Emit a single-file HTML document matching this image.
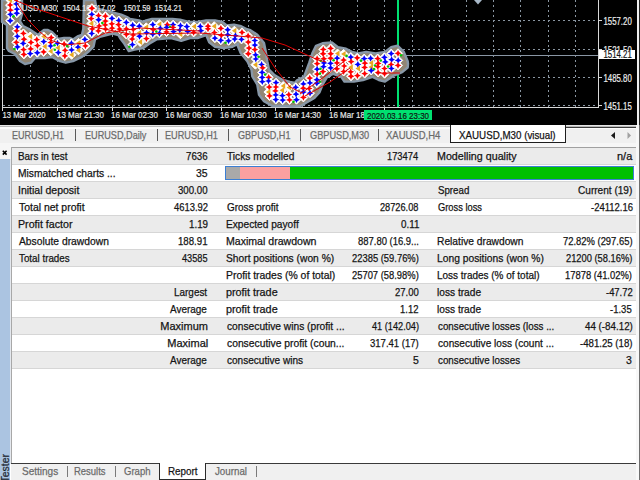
<!DOCTYPE html>
<html><head><meta charset="utf-8">
<style>
*{margin:0;padding:0;box-sizing:border-box}
html,body{width:640px;height:480px;overflow:hidden;background:#fff;font-family:"Liberation Sans",sans-serif}
.a{position:absolute}
.row{position:absolute;left:12px;width:624px;height:16px}
.g{background:#ebebeb}
.w{background:#fff}
.line{position:absolute;left:12px;width:624px;height:1px;background:#d6d6d6}
.c{position:absolute;font-size:11px;line-height:16px;color:#141414;white-space:nowrap;transform-origin:0 0;-webkit-text-stroke:0.25px currentColor}
.sc{display:inline-block}
.l{transform-origin:left center}
.r{transform-origin:right center}
svg text{font-family:"Liberation Sans",sans-serif;stroke-width:0.2px}
</style></head><body>
<svg class="a" style="left:0;top:0" width="640" height="125" viewBox="0 0 640 125">
<rect x="0" y="0" width="640" height="125" fill="#000"/>
<line x1="3" y1="20.5" x2="598" y2="20.5" stroke="#8a96a2" stroke-dasharray="2 3"/>
<line x1="3" y1="49.5" x2="598" y2="49.5" stroke="#8a96a2" stroke-dasharray="2 3"/>
<line x1="3" y1="77.5" x2="598" y2="77.5" stroke="#8a96a2" stroke-dasharray="2 3"/>
<line x1="3" y1="105.5" x2="598" y2="105.5" stroke="#8a96a2" stroke-dasharray="2 3"/>
<line x1="30.5" y1="0" x2="30.5" y2="107" stroke="#8a96a2" stroke-dasharray="2 3"/>
<line x1="57.5" y1="0" x2="57.5" y2="107" stroke="#8a96a2" stroke-dasharray="2 3"/>
<line x1="84.5" y1="0" x2="84.5" y2="107" stroke="#8a96a2" stroke-dasharray="2 3"/>
<line x1="112.5" y1="0" x2="112.5" y2="107" stroke="#8a96a2" stroke-dasharray="2 3"/>
<line x1="139.5" y1="0" x2="139.5" y2="107" stroke="#8a96a2" stroke-dasharray="2 3"/>
<line x1="166.5" y1="0" x2="166.5" y2="107" stroke="#8a96a2" stroke-dasharray="2 3"/>
<line x1="194.5" y1="0" x2="194.5" y2="107" stroke="#8a96a2" stroke-dasharray="2 3"/>
<line x1="221.5" y1="0" x2="221.5" y2="107" stroke="#8a96a2" stroke-dasharray="2 3"/>
<line x1="248.5" y1="0" x2="248.5" y2="107" stroke="#8a96a2" stroke-dasharray="2 3"/>
<line x1="275.5" y1="0" x2="275.5" y2="107" stroke="#8a96a2" stroke-dasharray="2 3"/>
<line x1="302.5" y1="0" x2="302.5" y2="107" stroke="#8a96a2" stroke-dasharray="2 3"/>
<line x1="330.5" y1="0" x2="330.5" y2="107" stroke="#8a96a2" stroke-dasharray="2 3"/>
<line x1="357.5" y1="0" x2="357.5" y2="107" stroke="#8a96a2" stroke-dasharray="2 3"/>
<line x1="384.5" y1="0" x2="384.5" y2="107" stroke="#8a96a2" stroke-dasharray="2 3"/>
<line x1="412.5" y1="0" x2="412.5" y2="107" stroke="#8a96a2" stroke-dasharray="2 3"/>
<line x1="439.5" y1="0" x2="439.5" y2="107" stroke="#8a96a2" stroke-dasharray="2 3"/>
<line x1="466.5" y1="0" x2="466.5" y2="107" stroke="#8a96a2" stroke-dasharray="2 3"/>
<line x1="493.5" y1="0" x2="493.5" y2="107" stroke="#8a96a2" stroke-dasharray="2 3"/>
<line x1="520.5" y1="0" x2="520.5" y2="107" stroke="#8a96a2" stroke-dasharray="2 3"/>
<line x1="548.5" y1="0" x2="548.5" y2="107" stroke="#8a96a2" stroke-dasharray="2 3"/>
<line x1="575.5" y1="0" x2="575.5" y2="107" stroke="#8a96a2" stroke-dasharray="2 3"/>
<line x1="2.5" y1="0" x2="2.5" y2="107.5" stroke="#d8d8d8"/>
<line x1="2" y1="107.5" x2="599" y2="107.5" stroke="#d8d8d8"/>
<line x1="598.5" y1="0" x2="598.5" y2="108" stroke="#d8d8d8"/>
<rect x="637" y="0" width="2" height="125" fill="#f0f0f0"/><rect x="639" y="0" width="1" height="125" fill="#202020"/>
<line x1="3" y1="55.5" x2="598" y2="55.5" stroke="#8a96a4"/>
<line x1="598" y1="20.5" x2="602" y2="20.5" stroke="#d8d8d8"/>
<line x1="598" y1="49.5" x2="602" y2="49.5" stroke="#d8d8d8"/>
<line x1="598" y1="77.5" x2="602" y2="77.5" stroke="#d8d8d8"/>
<line x1="598" y1="105.5" x2="602" y2="105.5" stroke="#d8d8d8"/>
<line x1="2.5" y1="107" x2="2.5" y2="111" stroke="#d8d8d8"/>
<line x1="57.5" y1="107" x2="57.5" y2="111" stroke="#d8d8d8"/>
<line x1="112.5" y1="107" x2="112.5" y2="111" stroke="#d8d8d8"/>
<line x1="166.5" y1="107" x2="166.5" y2="111" stroke="#d8d8d8"/>
<line x1="221.5" y1="107" x2="221.5" y2="111" stroke="#d8d8d8"/>
<line x1="275.5" y1="107" x2="275.5" y2="111" stroke="#d8d8d8"/>
<line x1="330.5" y1="107" x2="330.5" y2="111" stroke="#d8d8d8"/>
<line x1="384.5" y1="107" x2="384.5" y2="111" stroke="#d8d8d8"/>
<text x="603.4" y="24.6" font-size="10" fill="#ececec" stroke="#ececec" textLength="28.4" lengthAdjust="spacingAndGlyphs">1557.20</text>
<text x="603.4" y="53.6" font-size="10" fill="#ececec" stroke="#ececec" textLength="28.4" lengthAdjust="spacingAndGlyphs">1521.50</text>
<text x="603.4" y="81.6" font-size="10" fill="#ececec" stroke="#ececec" textLength="28.4" lengthAdjust="spacingAndGlyphs">1485.80</text>
<text x="603.4" y="109.6" font-size="10" fill="#ececec" stroke="#ececec" textLength="28.4" lengthAdjust="spacingAndGlyphs">1451.15</text>
<rect x="599" y="50" width="36" height="9" fill="#fff"/>
<text x="603.4" y="58" font-size="10" fill="#111" stroke="#111" textLength="28.4" lengthAdjust="spacingAndGlyphs">1514.21</text>
<text x="2.5" y="118" font-size="9.5" fill="#e8e8e8" stroke="#e8e8e8" textLength="43" lengthAdjust="spacingAndGlyphs">13 Mar 2020</text>
<text x="57" y="118" font-size="9.5" fill="#e8e8e8" stroke="#e8e8e8" textLength="47" lengthAdjust="spacingAndGlyphs">13 Mar 21:30</text>
<text x="111" y="118" font-size="9.5" fill="#e8e8e8" stroke="#e8e8e8" textLength="47" lengthAdjust="spacingAndGlyphs">16 Mar 02:30</text>
<text x="165.5" y="118" font-size="9.5" fill="#e8e8e8" stroke="#e8e8e8" textLength="46.5" lengthAdjust="spacingAndGlyphs">16 Mar 06:30</text>
<text x="220" y="118" font-size="9.5" fill="#e8e8e8" stroke="#e8e8e8" textLength="46.6" lengthAdjust="spacingAndGlyphs">16 Mar 10:30</text>
<text x="274" y="118" font-size="9.5" fill="#e8e8e8" stroke="#e8e8e8" textLength="47" lengthAdjust="spacingAndGlyphs">16 Mar 14:30</text>
<text x="329" y="118" font-size="9.5" fill="#e8e8e8" stroke="#e8e8e8" textLength="47" lengthAdjust="spacingAndGlyphs">16 Mar 18:30</text>
<rect x="364" y="110" width="68" height="10" fill="#00e070"/>
<text x="367" y="118.5" font-size="9.5" fill="#111" stroke="#111" textLength="62" lengthAdjust="spacingAndGlyphs">2020.03.16 23:30</text>
<rect x="397" y="0" width="2" height="107" fill="#00e070"/>
<path d="M474 0 L482 0 L478 4.5 Z" fill="#a8b8c8"/>
<defs>
<filter id="er4" x="-5%" y="-20%" width="110%" height="140%"><feMorphology operator="erode" radius="4.5"/></filter>
<mask id="inner" maskUnits="userSpaceOnUse" x="0" y="0" width="640" height="125"><polygon points="2.0,0.0 22.0,0.0 22.0,14.0 20.0,21.0 23.0,26.0 29.0,29.0 35.0,33.0 38.0,35.0 40.0,33.0 44.0,30.0 48.0,30.0 52.0,32.0 55.0,35.0 58.0,39.0 64.0,38.0 70.0,38.0 73.0,39.4 77.5,36.5 81.9,35.0 83.3,29.0 84.0,0.0 95.0,0.0 96.0,6.0 97.9,8.8 103.8,10.2 109.6,11.7 115.4,13.1 121.2,14.6 127.0,17.0 130.0,19.0 139.0,20.4 143.3,21.9 146.2,20.4 152.0,19.0 163.8,19.0 172.5,19.0 180.0,19.7 188.8,21.9 197.5,21.9 206.2,20.4 215.0,20.4 222.3,21.9 226.7,25.5 234.0,24.8 241.2,26.2 247.0,29.2 250.4,30.2 257.3,34.7 264.0,43.0 265.7,51.3 267.3,61.3 269.0,69.7 274.0,74.7 282.3,79.7 290.0,82.0 295.0,83.0 297.0,80.3 304.0,76.9 309.2,63.0 312.6,52.7 316.0,45.8 322.5,43.3 331.9,42.5 338.0,47.2 346.0,48.8 352.0,51.9 358.4,53.4 366.2,51.9 375.6,53.4 385.0,51.9 391.2,47.2 397.5,45.6 403.8,51.9 407.7,61.2 408.0,64.0 407.7,67.5 402.2,72.2 394.4,75.3 385.0,81.6 378.8,80.0 372.5,76.9 363.0,80.0 353.8,81.6 344.4,81.6 341.2,76.9 333.4,73.8 327.2,76.9 322.5,84.7 319.4,92.5 314.4,98.0 309.2,101.0 300.5,106.0 291.9,106.5 285.0,106.0 272.3,106.0 264.0,101.3 259.0,94.7 257.3,84.7 252.3,76.3 251.5,69.7 247.3,61.3 240.7,53.0 237.3,44.7 238.3,43.8 232.5,46.7 223.8,48.0 215.0,46.7 209.2,42.3 206.2,35.0 197.5,38.0 190.0,38.0 181.2,40.8 171.0,38.0 156.5,39.4 149.2,43.8 143.3,48.0 134.6,49.6 128.8,51.0 124.4,43.8 120.0,38.0 118.3,35.0 112.5,33.5 106.7,35.0 100.8,36.5 95.0,39.4 93.5,46.7 89.2,51.0 81.9,56.9 73.0,61.2 65.8,62.7 60.0,61.2 52.0,57.0 45.0,58.0 40.0,58.0 35.0,58.0 31.0,62.7 25.0,64.0 20.0,61.0 15.0,54.0 9.0,51.0 7.0,48.0 7.0,25.0 2.0,22.0" fill="#fff" filter="url(#er4)"/></mask>
</defs>
<polygon points="2.0,0.0 22.0,0.0 22.0,14.0 20.0,21.0 23.0,26.0 29.0,29.0 35.0,33.0 38.0,35.0 40.0,33.0 44.0,30.0 48.0,30.0 52.0,32.0 55.0,35.0 58.0,39.0 64.0,38.0 70.0,38.0 73.0,39.4 77.5,36.5 81.9,35.0 83.3,29.0 84.0,0.0 95.0,0.0 96.0,6.0 97.9,8.8 103.8,10.2 109.6,11.7 115.4,13.1 121.2,14.6 127.0,17.0 130.0,19.0 139.0,20.4 143.3,21.9 146.2,20.4 152.0,19.0 163.8,19.0 172.5,19.0 180.0,19.7 188.8,21.9 197.5,21.9 206.2,20.4 215.0,20.4 222.3,21.9 226.7,25.5 234.0,24.8 241.2,26.2 247.0,29.2 250.4,30.2 257.3,34.7 264.0,43.0 265.7,51.3 267.3,61.3 269.0,69.7 274.0,74.7 282.3,79.7 290.0,82.0 295.0,83.0 297.0,80.3 304.0,76.9 309.2,63.0 312.6,52.7 316.0,45.8 322.5,43.3 331.9,42.5 338.0,47.2 346.0,48.8 352.0,51.9 358.4,53.4 366.2,51.9 375.6,53.4 385.0,51.9 391.2,47.2 397.5,45.6 403.8,51.9 407.7,61.2 408.0,64.0 407.7,67.5 402.2,72.2 394.4,75.3 385.0,81.6 378.8,80.0 372.5,76.9 363.0,80.0 353.8,81.6 344.4,81.6 341.2,76.9 333.4,73.8 327.2,76.9 322.5,84.7 319.4,92.5 314.4,98.0 309.2,101.0 300.5,106.0 291.9,106.5 285.0,106.0 272.3,106.0 264.0,101.3 259.0,94.7 257.3,84.7 252.3,76.3 251.5,69.7 247.3,61.3 240.7,53.0 237.3,44.7 238.3,43.8 232.5,46.7 223.8,48.0 215.0,46.7 209.2,42.3 206.2,35.0 197.5,38.0 190.0,38.0 181.2,40.8 171.0,38.0 156.5,39.4 149.2,43.8 143.3,48.0 134.6,49.6 128.8,51.0 124.4,43.8 120.0,38.0 118.3,35.0 112.5,33.5 106.7,35.0 100.8,36.5 95.0,39.4 93.5,46.7 89.2,51.0 81.9,56.9 73.0,61.2 65.8,62.7 60.0,61.2 52.0,57.0 45.0,58.0 40.0,58.0 35.0,58.0 31.0,62.7 25.0,64.0 20.0,61.0 15.0,54.0 9.0,51.0 7.0,48.0 7.0,25.0 2.0,22.0" fill="#928674" stroke="#8898a8" stroke-width="2.4" stroke-linejoin="round"/>
<text x="5" y="11" font-size="9.5" fill="#e8e8e8" stroke="#e8e8e8" textLength="52" lengthAdjust="spacingAndGlyphs">XAUUSD,M30</text>
<text x="62.5" y="11" font-size="9.5" fill="#e8e8e8" stroke="#e8e8e8" textLength="28" lengthAdjust="spacingAndGlyphs">1504.16</text>
<text x="88.5" y="11" font-size="9.5" fill="#e8e8e8" stroke="#e8e8e8" textLength="27" lengthAdjust="spacingAndGlyphs">1517.02</text>
<text x="123.5" y="11" font-size="9.5" fill="#e8e8e8" stroke="#e8e8e8" textLength="27" lengthAdjust="spacingAndGlyphs">1501.59</text>
<text x="154.5" y="11" font-size="9.5" fill="#e8e8e8" stroke="#e8e8e8" textLength="27.5" lengthAdjust="spacingAndGlyphs">1514.21</text>
<g>
<path d="M5.6 -0.1 L10.1 -4.6 L14.6 -0.1 L10.1 4.4 Z" fill="#fff" stroke="#fff" stroke-width="1"/>
<path d="M5.7 5.0 L10.2 0.5 L14.7 5.0 L10.2 9.5 Z" fill="#fff" stroke="#fff" stroke-width="1"/>
<path d="M5.9 10.2 L10.4 5.7 L14.9 10.2 L10.4 14.7 Z" fill="#fff" stroke="#fff" stroke-width="1"/>
<path d="M5.9 14.3 L10.4 9.8 L14.9 14.3 L10.4 18.8 Z" fill="#fff" stroke="#fff" stroke-width="1"/>
<path d="M5.7 20.7 L10.2 16.2 L14.7 20.7 L10.2 25.2 Z" fill="#fff" stroke="#fff" stroke-width="1"/>
<path d="M12.4 -0.8 L16.9 -5.3 L21.4 -0.8 L16.9 3.7 Z" fill="#fff" stroke="#fff" stroke-width="1"/>
<path d="M11.8 3.9 L16.3 -0.6 L20.8 3.9 L16.3 8.4 Z" fill="#fff" stroke="#fff" stroke-width="1"/>
<path d="M12.4 9.2 L16.9 4.7 L21.4 9.2 L16.9 13.7 Z" fill="#fff" stroke="#fff" stroke-width="1"/>
<path d="M12.3 13.3 L16.8 8.8 L21.3 13.3 L16.8 17.8 Z" fill="#fff" stroke="#fff" stroke-width="1"/>
<path d="M12.8 26.8 L17.3 22.3 L21.8 26.8 L17.3 31.3 Z" fill="#fff" stroke="#fff" stroke-width="1"/>
<path d="M12.1 30.8 L16.6 26.3 L21.1 30.8 L16.6 35.3 Z" fill="#fff" stroke="#fff" stroke-width="1"/>
<path d="M12.8 36.3 L17.3 31.8 L21.8 36.3 L17.3 40.8 Z" fill="#fff" stroke="#fff" stroke-width="1"/>
<path d="M11.8 42.3 L16.3 37.8 L20.8 42.3 L16.3 46.8 Z" fill="#fff" stroke="#fff" stroke-width="1"/>
<path d="M13.0 47.0 L17.5 42.5 L22.0 47.0 L17.5 51.5 Z" fill="#fff" stroke="#fff" stroke-width="1"/>
<path d="M18.9 33.4 L23.4 28.9 L27.9 33.4 L23.4 37.9 Z" fill="#fff" stroke="#fff" stroke-width="1"/>
<path d="M19.5 39.2 L24.0 34.7 L28.5 39.2 L24.0 43.7 Z" fill="#fff" stroke="#fff" stroke-width="1"/>
<path d="M18.7 43.4 L23.2 38.9 L27.7 43.4 L23.2 47.9 Z" fill="#fff" stroke="#fff" stroke-width="1"/>
<path d="M19.1 49.6 L23.6 45.1 L28.1 49.6 L23.6 54.1 Z" fill="#fff" stroke="#fff" stroke-width="1"/>
<path d="M19.4 54.4 L23.9 49.9 L28.4 54.4 L23.9 58.9 Z" fill="#fff" stroke="#fff" stroke-width="1"/>
<path d="M25.7 36.5 L30.2 32.0 L34.7 36.5 L30.2 41.0 Z" fill="#fff" stroke="#fff" stroke-width="1"/>
<path d="M26.5 42.4 L31.0 37.9 L35.5 42.4 L31.0 46.9 Z" fill="#fff" stroke="#fff" stroke-width="1"/>
<path d="M26.2 48.9 L30.7 44.4 L35.2 48.9 L30.7 53.4 Z" fill="#fff" stroke="#fff" stroke-width="1"/>
<path d="M25.7 53.5 L30.2 49.0 L34.7 53.5 L30.2 58.0 Z" fill="#fff" stroke="#fff" stroke-width="1"/>
<path d="M32.3 39.7 L36.8 35.2 L41.3 39.7 L36.8 44.2 Z" fill="#fff" stroke="#fff" stroke-width="1"/>
<path d="M32.9 45.6 L37.4 41.1 L41.9 45.6 L37.4 50.1 Z" fill="#fff" stroke="#fff" stroke-width="1"/>
<path d="M32.8 52.7 L37.3 48.2 L41.8 52.7 L37.3 57.2 Z" fill="#fff" stroke="#fff" stroke-width="1"/>
<path d="M39.2 36.5 L43.7 32.0 L48.2 36.5 L43.7 41.0 Z" fill="#fff" stroke="#fff" stroke-width="1"/>
<path d="M39.3 41.6 L43.8 37.1 L48.3 41.6 L43.8 46.1 Z" fill="#fff" stroke="#fff" stroke-width="1"/>
<path d="M40.2 46.5 L44.7 42.0 L49.2 46.5 L44.7 51.0 Z" fill="#fff" stroke="#fff" stroke-width="1"/>
<path d="M39.1 51.9 L43.6 47.4 L48.1 51.9 L43.6 56.4 Z" fill="#fff" stroke="#fff" stroke-width="1"/>
<path d="M46.7 37.6 L51.2 33.1 L55.7 37.6 L51.2 42.1 Z" fill="#fff" stroke="#fff" stroke-width="1"/>
<path d="M46.2 42.5 L50.7 38.0 L55.2 42.5 L50.7 47.0 Z" fill="#fff" stroke="#fff" stroke-width="1"/>
<path d="M46.1 46.0 L50.6 41.5 L55.1 46.0 L50.6 50.5 Z" fill="#fff" stroke="#fff" stroke-width="1"/>
<path d="M46.2 51.2 L50.7 46.7 L55.2 51.2 L50.7 55.7 Z" fill="#fff" stroke="#fff" stroke-width="1"/>
<path d="M53.0 43.2 L57.5 38.7 L62.0 43.2 L57.5 47.7 Z" fill="#fff" stroke="#fff" stroke-width="1"/>
<path d="M53.3 47.7 L57.8 43.2 L62.3 47.7 L57.8 52.2 Z" fill="#fff" stroke="#fff" stroke-width="1"/>
<path d="M53.8 52.6 L58.3 48.1 L62.8 52.6 L58.3 57.1 Z" fill="#fff" stroke="#fff" stroke-width="1"/>
<path d="M59.6 44.1 L64.1 39.6 L68.6 44.1 L64.1 48.6 Z" fill="#fff" stroke="#fff" stroke-width="1"/>
<path d="M60.6 50.3 L65.1 45.8 L69.6 50.3 L65.1 54.8 Z" fill="#fff" stroke="#fff" stroke-width="1"/>
<path d="M60.3 56.0 L64.8 51.5 L69.3 56.0 L64.8 60.5 Z" fill="#fff" stroke="#fff" stroke-width="1"/>
<path d="M66.9 43.3 L71.4 38.8 L75.9 43.3 L71.4 47.8 Z" fill="#fff" stroke="#fff" stroke-width="1"/>
<path d="M67.1 49.9 L71.6 45.4 L76.1 49.9 L71.6 54.4 Z" fill="#fff" stroke="#fff" stroke-width="1"/>
<path d="M67.1 54.8 L71.6 50.3 L76.1 54.8 L71.6 59.3 Z" fill="#fff" stroke="#fff" stroke-width="1"/>
<path d="M74.0 42.9 L78.5 38.4 L83.0 42.9 L78.5 47.4 Z" fill="#fff" stroke="#fff" stroke-width="1"/>
<path d="M73.5 47.2 L78.0 42.7 L82.5 47.2 L78.0 51.7 Z" fill="#fff" stroke="#fff" stroke-width="1"/>
<path d="M73.9 50.3 L78.4 45.8 L82.9 50.3 L78.4 54.8 Z" fill="#fff" stroke="#fff" stroke-width="1"/>
<path d="M80.4 39.4 L84.9 34.9 L89.4 39.4 L84.9 43.9 Z" fill="#fff" stroke="#fff" stroke-width="1"/>
<path d="M80.9 45.9 L85.4 41.4 L89.9 45.9 L85.4 50.4 Z" fill="#fff" stroke="#fff" stroke-width="1"/>
<path d="M87.4 8.2 L91.9 3.7 L96.4 8.2 L91.9 12.7 Z" fill="#fff" stroke="#fff" stroke-width="1"/>
<path d="M87.3 14.3 L91.8 9.8 L96.3 14.3 L91.8 18.8 Z" fill="#fff" stroke="#fff" stroke-width="1"/>
<path d="M86.7 18.6 L91.2 14.1 L95.7 18.6 L91.2 23.1 Z" fill="#fff" stroke="#fff" stroke-width="1"/>
<path d="M86.9 23.5 L91.4 19.0 L95.9 23.5 L91.4 28.0 Z" fill="#fff" stroke="#fff" stroke-width="1"/>
<path d="M87.8 28.9 L92.3 24.4 L96.8 28.9 L92.3 33.4 Z" fill="#fff" stroke="#fff" stroke-width="1"/>
<path d="M87.2 33.5 L91.7 29.0 L96.2 33.5 L91.7 38.0 Z" fill="#fff" stroke="#fff" stroke-width="1"/>
<path d="M94.0 15.6 L98.5 11.1 L103.0 15.6 L98.5 20.1 Z" fill="#fff" stroke="#fff" stroke-width="1"/>
<path d="M94.1 19.8 L98.6 15.3 L103.1 19.8 L98.6 24.3 Z" fill="#fff" stroke="#fff" stroke-width="1"/>
<path d="M94.7 26.0 L99.2 21.5 L103.7 26.0 L99.2 30.5 Z" fill="#fff" stroke="#fff" stroke-width="1"/>
<path d="M93.9 30.9 L98.4 26.4 L102.9 30.9 L98.4 35.4 Z" fill="#fff" stroke="#fff" stroke-width="1"/>
<path d="M100.9 16.2 L105.4 11.7 L109.9 16.2 L105.4 20.7 Z" fill="#fff" stroke="#fff" stroke-width="1"/>
<path d="M100.9 21.1 L105.4 16.6 L109.9 21.1 L105.4 25.6 Z" fill="#fff" stroke="#fff" stroke-width="1"/>
<path d="M100.7 25.0 L105.2 20.5 L109.7 25.0 L105.2 29.5 Z" fill="#fff" stroke="#fff" stroke-width="1"/>
<path d="M101.1 29.1 L105.6 24.6 L110.1 29.1 L105.6 33.6 Z" fill="#fff" stroke="#fff" stroke-width="1"/>
<path d="M107.5 18.4 L112.0 13.9 L116.5 18.4 L112.0 22.9 Z" fill="#fff" stroke="#fff" stroke-width="1"/>
<path d="M107.3 23.8 L111.8 19.3 L116.3 23.8 L111.8 28.3 Z" fill="#fff" stroke="#fff" stroke-width="1"/>
<path d="M107.6 28.2 L112.1 23.7 L116.6 28.2 L112.1 32.7 Z" fill="#fff" stroke="#fff" stroke-width="1"/>
<path d="M114.3 20.5 L118.8 16.0 L123.3 20.5 L118.8 25.0 Z" fill="#fff" stroke="#fff" stroke-width="1"/>
<path d="M114.0 24.6 L118.5 20.1 L123.0 24.6 L118.5 29.1 Z" fill="#fff" stroke="#fff" stroke-width="1"/>
<path d="M115.1 29.1 L119.6 24.6 L124.1 29.1 L119.6 33.6 Z" fill="#fff" stroke="#fff" stroke-width="1"/>
<path d="M121.8 22.5 L126.3 18.0 L130.8 22.5 L126.3 27.0 Z" fill="#fff" stroke="#fff" stroke-width="1"/>
<path d="M121.8 28.9 L126.3 24.4 L130.8 28.9 L126.3 33.4 Z" fill="#fff" stroke="#fff" stroke-width="1"/>
<path d="M121.8 34.5 L126.3 30.0 L130.8 34.5 L126.3 39.0 Z" fill="#fff" stroke="#fff" stroke-width="1"/>
<path d="M128.2 25.2 L132.7 20.7 L137.2 25.2 L132.7 29.7 Z" fill="#fff" stroke="#fff" stroke-width="1"/>
<path d="M128.8 29.5 L133.3 25.0 L137.8 29.5 L133.3 34.0 Z" fill="#fff" stroke="#fff" stroke-width="1"/>
<path d="M128.7 35.0 L133.2 30.5 L137.7 35.0 L133.2 39.5 Z" fill="#fff" stroke="#fff" stroke-width="1"/>
<path d="M127.7 39.1 L132.2 34.6 L136.7 39.1 L132.2 43.6 Z" fill="#fff" stroke="#fff" stroke-width="1"/>
<path d="M127.9 44.7 L132.4 40.2 L136.9 44.7 L132.4 49.2 Z" fill="#fff" stroke="#fff" stroke-width="1"/>
<path d="M134.8 26.3 L139.3 21.8 L143.8 26.3 L139.3 30.8 Z" fill="#fff" stroke="#fff" stroke-width="1"/>
<path d="M134.7 32.7 L139.2 28.2 L143.7 32.7 L139.2 37.2 Z" fill="#fff" stroke="#fff" stroke-width="1"/>
<path d="M135.0 36.3 L139.5 31.8 L144.0 36.3 L139.5 40.8 Z" fill="#fff" stroke="#fff" stroke-width="1"/>
<path d="M135.6 42.0 L140.1 37.5 L144.6 42.0 L140.1 46.5 Z" fill="#fff" stroke="#fff" stroke-width="1"/>
<path d="M141.7 27.3 L146.2 22.8 L150.7 27.3 L146.2 31.8 Z" fill="#fff" stroke="#fff" stroke-width="1"/>
<path d="M142.1 32.8 L146.6 28.3 L151.1 32.8 L146.6 37.3 Z" fill="#fff" stroke="#fff" stroke-width="1"/>
<path d="M141.9 38.5 L146.4 34.0 L150.9 38.5 L146.4 43.0 Z" fill="#fff" stroke="#fff" stroke-width="1"/>
<path d="M148.3 24.7 L152.8 20.2 L157.3 24.7 L152.8 29.2 Z" fill="#fff" stroke="#fff" stroke-width="1"/>
<path d="M148.8 29.6 L153.3 25.1 L157.8 29.6 L153.3 34.1 Z" fill="#fff" stroke="#fff" stroke-width="1"/>
<path d="M148.3 34.1 L152.8 29.6 L157.3 34.1 L152.8 38.6 Z" fill="#fff" stroke="#fff" stroke-width="1"/>
<path d="M154.9 24.2 L159.4 19.7 L163.9 24.2 L159.4 28.7 Z" fill="#fff" stroke="#fff" stroke-width="1"/>
<path d="M155.8 28.3 L160.3 23.8 L164.8 28.3 L160.3 32.8 Z" fill="#fff" stroke="#fff" stroke-width="1"/>
<path d="M154.9 33.3 L159.4 28.8 L163.9 33.3 L159.4 37.8 Z" fill="#fff" stroke="#fff" stroke-width="1"/>
<path d="M162.8 24.7 L167.3 20.2 L171.8 24.7 L167.3 29.2 Z" fill="#fff" stroke="#fff" stroke-width="1"/>
<path d="M162.2 27.4 L166.7 22.9 L171.2 27.4 L166.7 31.9 Z" fill="#fff" stroke="#fff" stroke-width="1"/>
<path d="M162.0 32.0 L166.5 27.5 L171.0 32.0 L166.5 36.5 Z" fill="#fff" stroke="#fff" stroke-width="1"/>
<path d="M168.6 24.7 L173.1 20.2 L177.6 24.7 L173.1 29.2 Z" fill="#fff" stroke="#fff" stroke-width="1"/>
<path d="M168.5 27.4 L173.0 22.9 L177.5 27.4 L173.0 31.9 Z" fill="#fff" stroke="#fff" stroke-width="1"/>
<path d="M169.1 31.6 L173.6 27.1 L178.1 31.6 L173.6 36.1 Z" fill="#fff" stroke="#fff" stroke-width="1"/>
<path d="M176.0 25.6 L180.5 21.1 L185.0 25.6 L180.5 30.1 Z" fill="#fff" stroke="#fff" stroke-width="1"/>
<path d="M175.3 30.1 L179.8 25.6 L184.3 30.1 L179.8 34.6 Z" fill="#fff" stroke="#fff" stroke-width="1"/>
<path d="M175.9 34.2 L180.4 29.7 L184.9 34.2 L180.4 38.7 Z" fill="#fff" stroke="#fff" stroke-width="1"/>
<path d="M182.3 26.5 L186.8 22.0 L191.3 26.5 L186.8 31.0 Z" fill="#fff" stroke="#fff" stroke-width="1"/>
<path d="M183.2 31.4 L187.7 26.9 L192.2 31.4 L187.7 35.9 Z" fill="#fff" stroke="#fff" stroke-width="1"/>
<path d="M189.6 26.5 L194.1 22.0 L198.6 26.5 L194.1 31.0 Z" fill="#fff" stroke="#fff" stroke-width="1"/>
<path d="M189.1 32.4 L193.6 27.9 L198.1 32.4 L193.6 36.9 Z" fill="#fff" stroke="#fff" stroke-width="1"/>
<path d="M195.8 26.4 L200.3 21.9 L204.8 26.4 L200.3 30.9 Z" fill="#fff" stroke="#fff" stroke-width="1"/>
<path d="M196.4 30.7 L200.9 26.2 L205.4 30.7 L200.9 35.2 Z" fill="#fff" stroke="#fff" stroke-width="1"/>
<path d="M203.5 26.2 L208.0 21.7 L212.5 26.2 L208.0 30.7 Z" fill="#fff" stroke="#fff" stroke-width="1"/>
<path d="M203.5 28.8 L208.0 24.3 L212.5 28.8 L208.0 33.3 Z" fill="#fff" stroke="#fff" stroke-width="1"/>
<path d="M209.7 26.2 L214.2 21.7 L218.7 26.2 L214.2 30.7 Z" fill="#fff" stroke="#fff" stroke-width="1"/>
<path d="M209.9 32.5 L214.4 28.0 L218.9 32.5 L214.4 37.0 Z" fill="#fff" stroke="#fff" stroke-width="1"/>
<path d="M210.4 38.2 L214.9 33.7 L219.4 38.2 L214.9 42.7 Z" fill="#fff" stroke="#fff" stroke-width="1"/>
<path d="M216.4 28.4 L220.9 23.9 L225.4 28.4 L220.9 32.9 Z" fill="#fff" stroke="#fff" stroke-width="1"/>
<path d="M216.8 35.3 L221.3 30.8 L225.8 35.3 L221.3 39.8 Z" fill="#fff" stroke="#fff" stroke-width="1"/>
<path d="M216.3 40.3 L220.8 35.8 L225.3 40.3 L220.8 44.8 Z" fill="#fff" stroke="#fff" stroke-width="1"/>
<path d="M223.2 29.8 L227.7 25.3 L232.2 29.8 L227.7 34.3 Z" fill="#fff" stroke="#fff" stroke-width="1"/>
<path d="M223.2 34.8 L227.7 30.3 L232.2 34.8 L227.7 39.3 Z" fill="#fff" stroke="#fff" stroke-width="1"/>
<path d="M224.1 40.8 L228.6 36.3 L233.1 40.8 L228.6 45.3 Z" fill="#fff" stroke="#fff" stroke-width="1"/>
<path d="M229.9 30.7 L234.4 26.2 L238.9 30.7 L234.4 35.2 Z" fill="#fff" stroke="#fff" stroke-width="1"/>
<path d="M230.9 35.7 L235.4 31.2 L239.9 35.7 L235.4 40.2 Z" fill="#fff" stroke="#fff" stroke-width="1"/>
<path d="M230.2 39.1 L234.7 34.6 L239.2 39.1 L234.7 43.6 Z" fill="#fff" stroke="#fff" stroke-width="1"/>
<path d="M237.5 32.4 L242.0 27.9 L246.5 32.4 L242.0 36.9 Z" fill="#fff" stroke="#fff" stroke-width="1"/>
<path d="M237.0 39.4 L241.5 34.9 L246.0 39.4 L241.5 43.9 Z" fill="#fff" stroke="#fff" stroke-width="1"/>
<path d="M243.6 35.9 L248.1 31.4 L252.6 35.9 L248.1 40.4 Z" fill="#fff" stroke="#fff" stroke-width="1"/>
<path d="M243.8 42.1 L248.3 37.6 L252.8 42.1 L248.3 46.6 Z" fill="#fff" stroke="#fff" stroke-width="1"/>
<path d="M244.5 48.1 L249.0 43.6 L253.5 48.1 L249.0 52.6 Z" fill="#fff" stroke="#fff" stroke-width="1"/>
<path d="M243.8 53.7 L248.3 49.2 L252.8 53.7 L248.3 58.2 Z" fill="#fff" stroke="#fff" stroke-width="1"/>
<path d="M250.3 40.5 L254.8 36.0 L259.3 40.5 L254.8 45.0 Z" fill="#fff" stroke="#fff" stroke-width="1"/>
<path d="M250.4 45.1 L254.9 40.6 L259.4 45.1 L254.9 49.6 Z" fill="#fff" stroke="#fff" stroke-width="1"/>
<path d="M250.3 49.6 L254.8 45.1 L259.3 49.6 L254.8 54.1 Z" fill="#fff" stroke="#fff" stroke-width="1"/>
<path d="M251.1 54.8 L255.6 50.3 L260.1 54.8 L255.6 59.3 Z" fill="#fff" stroke="#fff" stroke-width="1"/>
<path d="M251.3 59.0 L255.8 54.5 L260.3 59.0 L255.8 63.5 Z" fill="#fff" stroke="#fff" stroke-width="1"/>
<path d="M250.9 64.7 L255.4 60.2 L259.9 64.7 L255.4 69.2 Z" fill="#fff" stroke="#fff" stroke-width="1"/>
<path d="M257.1 64.5 L261.6 60.0 L266.1 64.5 L261.6 69.0 Z" fill="#fff" stroke="#fff" stroke-width="1"/>
<path d="M258.1 67.8 L262.6 63.3 L267.1 67.8 L262.6 72.3 Z" fill="#fff" stroke="#fff" stroke-width="1"/>
<path d="M257.6 72.5 L262.1 68.0 L266.6 72.5 L262.1 77.0 Z" fill="#fff" stroke="#fff" stroke-width="1"/>
<path d="M257.7 77.4 L262.2 72.9 L266.7 77.4 L262.2 81.9 Z" fill="#fff" stroke="#fff" stroke-width="1"/>
<path d="M257.8 81.7 L262.3 77.2 L266.8 81.7 L262.3 86.2 Z" fill="#fff" stroke="#fff" stroke-width="1"/>
<path d="M264.2 77.3 L268.7 72.8 L273.2 77.3 L268.7 81.8 Z" fill="#fff" stroke="#fff" stroke-width="1"/>
<path d="M264.0 81.0 L268.5 76.5 L273.0 81.0 L268.5 85.5 Z" fill="#fff" stroke="#fff" stroke-width="1"/>
<path d="M264.7 87.1 L269.2 82.6 L273.7 87.1 L269.2 91.6 Z" fill="#fff" stroke="#fff" stroke-width="1"/>
<path d="M263.9 92.0 L268.4 87.5 L272.9 92.0 L268.4 96.5 Z" fill="#fff" stroke="#fff" stroke-width="1"/>
<path d="M265.0 96.0 L269.5 91.5 L274.0 96.0 L269.5 100.5 Z" fill="#fff" stroke="#fff" stroke-width="1"/>
<path d="M271.5 82.7 L276.0 78.2 L280.5 82.7 L276.0 87.2 Z" fill="#fff" stroke="#fff" stroke-width="1"/>
<path d="M271.4 87.0 L275.9 82.5 L280.4 87.0 L275.9 91.5 Z" fill="#fff" stroke="#fff" stroke-width="1"/>
<path d="M270.9 90.9 L275.4 86.4 L279.9 90.9 L275.4 95.4 Z" fill="#fff" stroke="#fff" stroke-width="1"/>
<path d="M271.2 94.9 L275.7 90.4 L280.2 94.9 L275.7 99.4 Z" fill="#fff" stroke="#fff" stroke-width="1"/>
<path d="M271.3 99.6 L275.8 95.1 L280.3 99.6 L275.8 104.1 Z" fill="#fff" stroke="#fff" stroke-width="1"/>
<path d="M278.7 86.0 L283.2 81.5 L287.7 86.0 L283.2 90.5 Z" fill="#fff" stroke="#fff" stroke-width="1"/>
<path d="M277.6 90.2 L282.1 85.7 L286.6 90.2 L282.1 94.7 Z" fill="#fff" stroke="#fff" stroke-width="1"/>
<path d="M277.9 95.5 L282.4 91.0 L286.9 95.5 L282.4 100.0 Z" fill="#fff" stroke="#fff" stroke-width="1"/>
<path d="M278.2 100.1 L282.7 95.6 L287.2 100.1 L282.7 104.6 Z" fill="#fff" stroke="#fff" stroke-width="1"/>
<path d="M284.6 87.5 L289.1 83.0 L293.6 87.5 L289.1 92.0 Z" fill="#fff" stroke="#fff" stroke-width="1"/>
<path d="M284.3 94.6 L288.8 90.1 L293.3 94.6 L288.8 99.1 Z" fill="#fff" stroke="#fff" stroke-width="1"/>
<path d="M285.0 99.9 L289.5 95.4 L294.0 99.9 L289.5 104.4 Z" fill="#fff" stroke="#fff" stroke-width="1"/>
<path d="M291.2 87.3 L295.7 82.8 L300.2 87.3 L295.7 91.8 Z" fill="#fff" stroke="#fff" stroke-width="1"/>
<path d="M291.5 94.2 L296.0 89.7 L300.5 94.2 L296.0 98.7 Z" fill="#fff" stroke="#fff" stroke-width="1"/>
<path d="M292.0 99.7 L296.5 95.2 L301.0 99.7 L296.5 104.2 Z" fill="#fff" stroke="#fff" stroke-width="1"/>
<path d="M298.9 83.9 L303.4 79.4 L307.9 83.9 L303.4 88.4 Z" fill="#fff" stroke="#fff" stroke-width="1"/>
<path d="M298.8 88.2 L303.3 83.7 L307.8 88.2 L303.3 92.7 Z" fill="#fff" stroke="#fff" stroke-width="1"/>
<path d="M298.9 92.1 L303.4 87.6 L307.9 92.1 L303.4 96.6 Z" fill="#fff" stroke="#fff" stroke-width="1"/>
<path d="M298.9 97.4 L303.4 92.9 L307.9 97.4 L303.4 101.9 Z" fill="#fff" stroke="#fff" stroke-width="1"/>
<path d="M305.3 78.1 L309.8 73.6 L314.3 78.1 L309.8 82.6 Z" fill="#fff" stroke="#fff" stroke-width="1"/>
<path d="M305.4 82.9 L309.9 78.4 L314.4 82.9 L309.9 87.4 Z" fill="#fff" stroke="#fff" stroke-width="1"/>
<path d="M304.7 88.5 L309.2 84.0 L313.7 88.5 L309.2 93.0 Z" fill="#fff" stroke="#fff" stroke-width="1"/>
<path d="M305.5 93.2 L310.0 88.7 L314.5 93.2 L310.0 97.7 Z" fill="#fff" stroke="#fff" stroke-width="1"/>
<path d="M312.6 58.7 L317.1 54.2 L321.6 58.7 L317.1 63.2 Z" fill="#fff" stroke="#fff" stroke-width="1"/>
<path d="M312.6 63.7 L317.1 59.2 L321.6 63.7 L317.1 68.2 Z" fill="#fff" stroke="#fff" stroke-width="1"/>
<path d="M312.6 69.2 L317.1 64.7 L321.6 69.2 L317.1 73.7 Z" fill="#fff" stroke="#fff" stroke-width="1"/>
<path d="M312.7 74.0 L317.2 69.5 L321.7 74.0 L317.2 78.5 Z" fill="#fff" stroke="#fff" stroke-width="1"/>
<path d="M312.4 79.7 L316.9 75.2 L321.4 79.7 L316.9 84.2 Z" fill="#fff" stroke="#fff" stroke-width="1"/>
<path d="M312.3 83.2 L316.8 78.7 L321.3 83.2 L316.8 87.7 Z" fill="#fff" stroke="#fff" stroke-width="1"/>
<path d="M318.8 49.4 L323.3 44.9 L327.8 49.4 L323.3 53.9 Z" fill="#fff" stroke="#fff" stroke-width="1"/>
<path d="M318.6 53.7 L323.1 49.2 L327.6 53.7 L323.1 58.2 Z" fill="#fff" stroke="#fff" stroke-width="1"/>
<path d="M319.3 58.8 L323.8 54.3 L328.3 58.8 L323.8 63.3 Z" fill="#fff" stroke="#fff" stroke-width="1"/>
<path d="M319.5 62.9 L324.0 58.4 L328.5 62.9 L324.0 67.4 Z" fill="#fff" stroke="#fff" stroke-width="1"/>
<path d="M319.0 66.7 L323.5 62.2 L328.0 66.7 L323.5 71.2 Z" fill="#fff" stroke="#fff" stroke-width="1"/>
<path d="M318.5 71.6 L323.0 67.1 L327.5 71.6 L323.0 76.1 Z" fill="#fff" stroke="#fff" stroke-width="1"/>
<path d="M326.1 48.4 L330.6 43.9 L335.1 48.4 L330.6 52.9 Z" fill="#fff" stroke="#fff" stroke-width="1"/>
<path d="M326.2 53.7 L330.7 49.2 L335.2 53.7 L330.7 58.2 Z" fill="#fff" stroke="#fff" stroke-width="1"/>
<path d="M326.1 58.3 L330.6 53.8 L335.1 58.3 L330.6 62.8 Z" fill="#fff" stroke="#fff" stroke-width="1"/>
<path d="M326.0 63.3 L330.5 58.8 L335.0 63.3 L330.5 67.8 Z" fill="#fff" stroke="#fff" stroke-width="1"/>
<path d="M326.1 67.9 L330.6 63.4 L335.1 67.9 L330.6 72.4 Z" fill="#fff" stroke="#fff" stroke-width="1"/>
<path d="M333.0 53.5 L337.5 49.0 L342.0 53.5 L337.5 58.0 Z" fill="#fff" stroke="#fff" stroke-width="1"/>
<path d="M332.6 58.2 L337.1 53.7 L341.6 58.2 L337.1 62.7 Z" fill="#fff" stroke="#fff" stroke-width="1"/>
<path d="M332.5 62.9 L337.0 58.4 L341.5 62.9 L337.0 67.4 Z" fill="#fff" stroke="#fff" stroke-width="1"/>
<path d="M332.4 68.8 L336.9 64.3 L341.4 68.8 L336.9 73.3 Z" fill="#fff" stroke="#fff" stroke-width="1"/>
<path d="M339.1 53.9 L343.6 49.4 L348.1 53.9 L343.6 58.4 Z" fill="#fff" stroke="#fff" stroke-width="1"/>
<path d="M339.1 60.0 L343.6 55.5 L348.1 60.0 L343.6 64.5 Z" fill="#fff" stroke="#fff" stroke-width="1"/>
<path d="M339.7 66.0 L344.2 61.5 L348.7 66.0 L344.2 70.5 Z" fill="#fff" stroke="#fff" stroke-width="1"/>
<path d="M339.2 71.5 L343.7 67.0 L348.2 71.5 L343.7 76.0 Z" fill="#fff" stroke="#fff" stroke-width="1"/>
<path d="M346.3 57.1 L350.8 52.6 L355.3 57.1 L350.8 61.6 Z" fill="#fff" stroke="#fff" stroke-width="1"/>
<path d="M346.7 61.7 L351.2 57.2 L355.7 61.7 L351.2 66.2 Z" fill="#fff" stroke="#fff" stroke-width="1"/>
<path d="M346.3 67.2 L350.8 62.7 L355.3 67.2 L350.8 71.7 Z" fill="#fff" stroke="#fff" stroke-width="1"/>
<path d="M346.2 71.8 L350.7 67.3 L355.2 71.8 L350.7 76.3 Z" fill="#fff" stroke="#fff" stroke-width="1"/>
<path d="M346.5 76.3 L351.0 71.8 L355.5 76.3 L351.0 80.8 Z" fill="#fff" stroke="#fff" stroke-width="1"/>
<path d="M352.7 57.8 L357.2 53.3 L361.7 57.8 L357.2 62.3 Z" fill="#fff" stroke="#fff" stroke-width="1"/>
<path d="M353.4 64.4 L357.9 59.9 L362.4 64.4 L357.9 68.9 Z" fill="#fff" stroke="#fff" stroke-width="1"/>
<path d="M353.5 68.6 L358.0 64.1 L362.5 68.6 L358.0 73.1 Z" fill="#fff" stroke="#fff" stroke-width="1"/>
<path d="M352.9 75.6 L357.4 71.1 L361.9 75.6 L357.4 80.1 Z" fill="#fff" stroke="#fff" stroke-width="1"/>
<path d="M359.7 58.6 L364.2 54.1 L368.7 58.6 L364.2 63.1 Z" fill="#fff" stroke="#fff" stroke-width="1"/>
<path d="M360.4 63.2 L364.9 58.7 L369.4 63.2 L364.9 67.7 Z" fill="#fff" stroke="#fff" stroke-width="1"/>
<path d="M360.1 67.4 L364.6 62.9 L369.1 67.4 L364.6 71.9 Z" fill="#fff" stroke="#fff" stroke-width="1"/>
<path d="M360.2 73.6 L364.7 69.1 L369.2 73.6 L364.7 78.1 Z" fill="#fff" stroke="#fff" stroke-width="1"/>
<path d="M366.1 58.3 L370.6 53.8 L375.1 58.3 L370.6 62.8 Z" fill="#fff" stroke="#fff" stroke-width="1"/>
<path d="M366.7 63.1 L371.2 58.6 L375.7 63.1 L371.2 67.6 Z" fill="#fff" stroke="#fff" stroke-width="1"/>
<path d="M366.5 67.1 L371.0 62.6 L375.5 67.1 L371.0 71.6 Z" fill="#fff" stroke="#fff" stroke-width="1"/>
<path d="M366.7 70.5 L371.2 66.0 L375.7 70.5 L371.2 75.0 Z" fill="#fff" stroke="#fff" stroke-width="1"/>
<path d="M373.2 58.5 L377.7 54.0 L382.2 58.5 L377.7 63.0 Z" fill="#fff" stroke="#fff" stroke-width="1"/>
<path d="M373.6 63.5 L378.1 59.0 L382.6 63.5 L378.1 68.0 Z" fill="#fff" stroke="#fff" stroke-width="1"/>
<path d="M373.3 66.7 L377.8 62.2 L382.3 66.7 L377.8 71.2 Z" fill="#fff" stroke="#fff" stroke-width="1"/>
<path d="M373.6 72.5 L378.1 68.0 L382.6 72.5 L378.1 77.0 Z" fill="#fff" stroke="#fff" stroke-width="1"/>
<path d="M379.9 57.3 L384.4 52.8 L388.9 57.3 L384.4 61.8 Z" fill="#fff" stroke="#fff" stroke-width="1"/>
<path d="M380.8 61.9 L385.3 57.4 L389.8 61.9 L385.3 66.4 Z" fill="#fff" stroke="#fff" stroke-width="1"/>
<path d="M380.0 68.5 L384.5 64.0 L389.0 68.5 L384.5 73.0 Z" fill="#fff" stroke="#fff" stroke-width="1"/>
<path d="M380.1 73.7 L384.6 69.2 L389.1 73.7 L384.6 78.2 Z" fill="#fff" stroke="#fff" stroke-width="1"/>
<path d="M386.7 53.6 L391.2 49.1 L395.7 53.6 L391.2 58.1 Z" fill="#fff" stroke="#fff" stroke-width="1"/>
<path d="M387.1 59.7 L391.6 55.2 L396.1 59.7 L391.6 64.2 Z" fill="#fff" stroke="#fff" stroke-width="1"/>
<path d="M386.6 64.5 L391.1 60.0 L395.6 64.5 L391.1 69.0 Z" fill="#fff" stroke="#fff" stroke-width="1"/>
<path d="M386.9 68.5 L391.4 64.0 L395.9 68.5 L391.4 73.0 Z" fill="#fff" stroke="#fff" stroke-width="1"/>
<path d="M393.5 53.3 L398.0 48.8 L402.5 53.3 L398.0 57.8 Z" fill="#fff" stroke="#fff" stroke-width="1"/>
<path d="M393.7 60.4 L398.2 55.9 L402.7 60.4 L398.2 64.9 Z" fill="#fff" stroke="#fff" stroke-width="1"/>
<path d="M393.5 65.4 L398.0 60.9 L402.5 65.4 L398.0 69.9 Z" fill="#fff" stroke="#fff" stroke-width="1"/>
<path d="M12.1 -3.1 L12.1 2.9 L7.6 -0.1 Z" fill="#e8a820"/>
<path d="M6.8 5.0 L9.0 3.9 L10.2 1.6 L11.3 3.9 L13.6 5.0 L11.3 6.1 L10.2 8.4 L9.0 6.1 Z" fill="#ff0000"/>
<path d="M7.0 10.2 L9.3 9.1 L10.4 6.8 L11.5 9.1 L13.8 10.2 L11.5 11.3 L10.4 13.6 L9.3 11.3 Z" fill="#ff0000"/>
<path d="M7.0 14.3 L9.3 13.2 L10.4 10.9 L11.6 13.2 L13.8 14.3 L11.6 15.5 L10.4 17.7 L9.3 15.5 Z" fill="#0000ff"/>
<circle cx="13.4" cy="16.3" r="1.3" fill="#00c800"/>
<path d="M6.8 20.7 L9.1 19.6 L10.2 17.3 L11.4 19.6 L13.6 20.7 L11.4 21.9 L10.2 24.1 L9.1 21.9 Z" fill="#0000ff"/>
<path d="M13.5 -0.8 L15.8 -1.9 L16.9 -4.2 L18.0 -1.9 L20.3 -0.8 L18.0 0.3 L16.9 2.6 L15.8 0.3 Z" fill="#ff0000"/>
<path d="M12.9 3.9 L15.2 2.8 L16.3 0.5 L17.4 2.8 L19.7 3.9 L17.4 5.0 L16.3 7.3 L15.2 5.0 Z" fill="#0000ff"/>
<path d="M13.5 9.2 L15.8 8.1 L16.9 5.8 L18.0 8.1 L20.3 9.2 L18.0 10.3 L16.9 12.6 L15.8 10.3 Z" fill="#0000ff"/>
<path d="M13.4 13.3 L15.7 12.1 L16.8 9.9 L17.9 12.1 L20.2 13.3 L17.9 14.4 L16.8 16.7 L15.7 14.4 Z" fill="#0000ff"/>
<path d="M13.9 26.8 L16.2 25.7 L17.3 23.4 L18.4 25.7 L20.7 26.8 L18.4 27.9 L17.3 30.2 L16.2 27.9 Z" fill="#0000ff"/>
<path d="M13.2 30.8 L15.5 29.7 L16.6 27.4 L17.7 29.7 L20.0 30.8 L17.7 31.9 L16.6 34.2 L15.5 31.9 Z" fill="#ff0000"/>
<path d="M13.9 36.3 L16.2 35.2 L17.3 32.9 L18.4 35.2 L20.7 36.3 L18.4 37.5 L17.3 39.7 L16.2 37.5 Z" fill="#0000ff"/>
<path d="M12.9 42.3 L15.2 41.2 L16.3 38.9 L17.4 41.2 L19.7 42.3 L17.4 43.4 L16.3 45.7 L15.2 43.4 Z" fill="#ff0000"/>
<path d="M14.1 47.0 L16.3 45.8 L17.5 43.6 L18.6 45.8 L20.9 47.0 L18.6 48.1 L17.5 50.4 L16.3 48.1 Z" fill="#0000ff"/>
<circle cx="14.5" cy="49.0" r="1.3" fill="#00c800"/>
<path d="M20.0 33.4 L22.3 32.3 L23.4 30.0 L24.5 32.3 L26.8 33.4 L24.5 34.6 L23.4 36.8 L22.3 34.6 Z" fill="#ff0000"/>
<path d="M20.6 39.2 L22.9 38.1 L24.0 35.8 L25.1 38.1 L27.4 39.2 L25.1 40.4 L24.0 42.6 L22.9 40.4 Z" fill="#ff0000"/>
<path d="M19.8 43.4 L22.0 42.2 L23.2 40.0 L24.3 42.2 L26.6 43.4 L24.3 44.5 L23.2 46.8 L22.0 44.5 Z" fill="#0000ff"/>
<path d="M20.2 49.6 L22.5 48.5 L23.6 46.2 L24.7 48.5 L27.0 49.6 L24.7 50.7 L23.6 53.0 L22.5 50.7 Z" fill="#ff0000"/>
<path d="M20.5 54.4 L22.7 53.3 L23.9 51.0 L25.0 53.3 L27.3 54.4 L25.0 55.5 L23.9 57.8 L22.7 55.5 Z" fill="#ff0000"/>
<path d="M32.2 33.5 L32.2 39.5 L27.7 36.5 Z" fill="#e8a820"/>
<path d="M27.6 42.4 L29.8 41.2 L31.0 39.0 L32.1 41.2 L34.4 42.4 L32.1 43.5 L31.0 45.8 L29.8 43.5 Z" fill="#ff0000"/>
<path d="M27.3 48.9 L29.5 47.8 L30.7 45.5 L31.8 47.8 L34.1 48.9 L31.8 50.0 L30.7 52.3 L29.5 50.0 Z" fill="#ff0000"/>
<path d="M26.8 53.5 L29.1 52.4 L30.2 50.1 L31.3 52.4 L33.6 53.5 L31.3 54.7 L30.2 56.9 L29.1 54.7 Z" fill="#0000ff"/>
<path d="M33.4 39.7 L35.7 38.6 L36.8 36.3 L37.9 38.6 L40.2 39.7 L37.9 40.8 L36.8 43.1 L35.7 40.8 Z" fill="#ff0000"/>
<path d="M34.0 45.6 L36.3 44.5 L37.4 42.2 L38.6 44.5 L40.8 45.6 L38.6 46.7 L37.4 49.0 L36.3 46.7 Z" fill="#ff0000"/>
<path d="M33.9 52.7 L36.2 51.6 L37.3 49.3 L38.4 51.6 L40.7 52.7 L38.4 53.9 L37.3 56.1 L36.2 53.9 Z" fill="#0000ff"/>
<path d="M45.7 33.5 L45.7 39.5 L41.2 36.5 Z" fill="#e8a820"/>
<path d="M40.4 41.6 L42.6 40.5 L43.8 38.2 L44.9 40.5 L47.2 41.6 L44.9 42.7 L43.8 45.0 L42.6 42.7 Z" fill="#0000ff"/>
<path d="M46.7 43.5 L46.7 49.5 L42.2 46.5 Z" fill="#e8a820"/>
<path d="M40.2 51.9 L42.5 50.8 L43.6 48.5 L44.8 50.8 L47.0 51.9 L44.8 53.0 L43.6 55.3 L42.5 53.0 Z" fill="#ff0000"/>
<path d="M47.8 37.6 L50.1 36.5 L51.2 34.2 L52.3 36.5 L54.6 37.6 L52.3 38.7 L51.2 41.0 L50.1 38.7 Z" fill="#ff0000"/>
<path d="M47.3 42.5 L49.6 41.4 L50.7 39.1 L51.8 41.4 L54.1 42.5 L51.8 43.6 L50.7 45.9 L49.6 43.6 Z" fill="#ff0000"/>
<path d="M47.2 46.0 L49.5 44.9 L50.6 42.6 L51.7 44.9 L54.0 46.0 L51.7 47.1 L50.6 49.4 L49.5 47.1 Z" fill="#0000ff"/>
<path d="M52.7 48.2 L52.7 54.2 L48.2 51.2 Z" fill="#e8a820"/>
<path d="M54.1 43.2 L56.4 42.1 L57.5 39.8 L58.6 42.1 L60.9 43.2 L58.6 44.3 L57.5 46.6 L56.4 44.3 Z" fill="#0000ff"/>
<circle cx="54.5" cy="45.2" r="1.3" fill="#00c800"/>
<path d="M59.8 44.7 L59.8 50.7 L55.3 47.7 Z" fill="#e8a820"/>
<circle cx="54.8" cy="49.7" r="1.3" fill="#00c800"/>
<path d="M54.9 52.6 L57.2 51.5 L58.3 49.2 L59.4 51.5 L61.7 52.6 L59.4 53.7 L58.3 56.0 L57.2 53.7 Z" fill="#0000ff"/>
<path d="M60.7 44.1 L63.0 43.0 L64.1 40.7 L65.3 43.0 L67.5 44.1 L65.3 45.3 L64.1 47.5 L63.0 45.3 Z" fill="#ff0000"/>
<circle cx="67.1" cy="46.1" r="1.3" fill="#00c800"/>
<path d="M61.7 50.3 L64.0 49.2 L65.1 46.9 L66.2 49.2 L68.5 50.3 L66.2 51.4 L65.1 53.7 L64.0 51.4 Z" fill="#ff0000"/>
<path d="M61.4 56.0 L63.7 54.8 L64.8 52.6 L66.0 54.8 L68.2 56.0 L66.0 57.1 L64.8 59.4 L63.7 57.1 Z" fill="#ff0000"/>
<path d="M68.0 43.3 L70.3 42.2 L71.4 39.9 L72.6 42.2 L74.8 43.3 L72.6 44.4 L71.4 46.7 L70.3 44.4 Z" fill="#0000ff"/>
<path d="M68.2 49.9 L70.5 48.8 L71.6 46.5 L72.7 48.8 L75.0 49.9 L72.7 51.0 L71.6 53.3 L70.5 51.0 Z" fill="#0000ff"/>
<path d="M73.6 51.8 L73.6 57.8 L69.1 54.8 Z" fill="#e8a820"/>
<path d="M80.5 39.9 L80.5 45.9 L76.0 42.9 Z" fill="#e8a820"/>
<path d="M74.6 47.2 L76.9 46.1 L78.0 43.8 L79.2 46.1 L81.4 47.2 L79.2 48.3 L78.0 50.6 L76.9 48.3 Z" fill="#0000ff"/>
<path d="M80.4 47.3 L80.4 53.3 L75.9 50.3 Z" fill="#e8a820"/>
<path d="M81.5 39.4 L83.7 38.2 L84.9 36.0 L86.0 38.2 L88.3 39.4 L86.0 40.5 L84.9 42.8 L83.7 40.5 Z" fill="#0000ff"/>
<path d="M82.0 45.9 L84.3 44.8 L85.4 42.5 L86.5 44.8 L88.8 45.9 L86.5 47.0 L85.4 49.3 L84.3 47.0 Z" fill="#ff0000"/>
<path d="M88.5 8.2 L90.8 7.1 L91.9 4.8 L93.1 7.1 L95.3 8.2 L93.1 9.4 L91.9 11.6 L90.8 9.4 Z" fill="#ff0000"/>
<path d="M88.4 14.3 L90.7 13.2 L91.8 10.9 L92.9 13.2 L95.2 14.3 L92.9 15.4 L91.8 17.7 L90.7 15.4 Z" fill="#0000ff"/>
<path d="M87.8 18.6 L90.1 17.5 L91.2 15.2 L92.3 17.5 L94.6 18.6 L92.3 19.7 L91.2 22.0 L90.1 19.7 Z" fill="#ff0000"/>
<path d="M93.4 20.5 L93.4 26.5 L88.9 23.5 Z" fill="#e8a820"/>
<path d="M88.9 28.9 L91.2 27.8 L92.3 25.5 L93.4 27.8 L95.7 28.9 L93.4 30.0 L92.3 32.3 L91.2 30.0 Z" fill="#ff0000"/>
<path d="M88.3 33.5 L90.6 32.4 L91.7 30.1 L92.9 32.4 L95.1 33.5 L92.9 34.6 L91.7 36.9 L90.6 34.6 Z" fill="#0000ff"/>
<path d="M95.1 15.6 L97.4 14.5 L98.5 12.2 L99.6 14.5 L101.9 15.6 L99.6 16.7 L98.5 19.0 L97.4 16.7 Z" fill="#ff0000"/>
<path d="M95.2 19.8 L97.5 18.6 L98.6 16.4 L99.7 18.6 L102.0 19.8 L99.7 20.9 L98.6 23.2 L97.5 20.9 Z" fill="#0000ff"/>
<path d="M95.8 26.0 L98.0 24.9 L99.2 22.6 L100.3 24.9 L102.6 26.0 L100.3 27.1 L99.2 29.4 L98.0 27.1 Z" fill="#ff0000"/>
<path d="M95.0 30.9 L97.2 29.8 L98.4 27.5 L99.5 29.8 L101.8 30.9 L99.5 32.0 L98.4 34.3 L97.2 32.0 Z" fill="#ff0000"/>
<path d="M102.0 16.2 L104.3 15.1 L105.4 12.8 L106.6 15.1 L108.8 16.2 L106.6 17.3 L105.4 19.6 L104.3 17.3 Z" fill="#ff0000"/>
<path d="M102.0 21.1 L104.3 20.0 L105.4 17.7 L106.5 20.0 L108.8 21.1 L106.5 22.2 L105.4 24.5 L104.3 22.2 Z" fill="#ff0000"/>
<circle cx="102.4" cy="23.1" r="1.3" fill="#00c800"/>
<path d="M101.8 25.0 L104.1 23.8 L105.2 21.6 L106.3 23.8 L108.6 25.0 L106.3 26.1 L105.2 28.4 L104.1 26.1 Z" fill="#ff0000"/>
<path d="M102.2 29.1 L104.5 28.0 L105.6 25.7 L106.7 28.0 L109.0 29.1 L106.7 30.2 L105.6 32.5 L104.5 30.2 Z" fill="#ff0000"/>
<path d="M108.6 18.4 L110.8 17.3 L112.0 15.0 L113.1 17.3 L115.4 18.4 L113.1 19.6 L112.0 21.8 L110.8 19.6 Z" fill="#0000ff"/>
<path d="M108.4 23.8 L110.7 22.7 L111.8 20.4 L112.9 22.7 L115.2 23.8 L112.9 24.9 L111.8 27.2 L110.7 24.9 Z" fill="#ff0000"/>
<path d="M108.7 28.2 L111.0 27.1 L112.1 24.8 L113.2 27.1 L115.5 28.2 L113.2 29.3 L112.1 31.6 L111.0 29.3 Z" fill="#ff0000"/>
<path d="M115.4 20.5 L117.6 19.4 L118.8 17.1 L119.9 19.4 L122.2 20.5 L119.9 21.6 L118.8 23.9 L117.6 21.6 Z" fill="#0000ff"/>
<path d="M115.1 24.6 L117.4 23.4 L118.5 21.2 L119.6 23.4 L121.9 24.6 L119.6 25.7 L118.5 28.0 L117.4 25.7 Z" fill="#ff0000"/>
<path d="M116.2 29.1 L118.5 27.9 L119.6 25.7 L120.7 27.9 L123.0 29.1 L120.7 30.2 L119.6 32.5 L118.5 30.2 Z" fill="#ff0000"/>
<path d="M122.9 22.5 L125.2 21.3 L126.3 19.1 L127.4 21.3 L129.7 22.5 L127.4 23.6 L126.3 25.9 L125.2 23.6 Z" fill="#0000ff"/>
<path d="M122.9 28.9 L125.2 27.7 L126.3 25.5 L127.5 27.7 L129.7 28.9 L127.5 30.0 L126.3 32.3 L125.2 30.0 Z" fill="#ff0000"/>
<path d="M122.9 34.5 L125.2 33.4 L126.3 31.1 L127.5 33.4 L129.7 34.5 L127.5 35.6 L126.3 37.9 L125.2 35.6 Z" fill="#ff0000"/>
<path d="M129.3 25.2 L131.6 24.1 L132.7 21.8 L133.8 24.1 L136.1 25.2 L133.8 26.4 L132.7 28.6 L131.6 26.4 Z" fill="#0000ff"/>
<path d="M129.9 29.5 L132.1 28.4 L133.3 26.1 L134.4 28.4 L136.7 29.5 L134.4 30.6 L133.3 32.9 L132.1 30.6 Z" fill="#ff0000"/>
<path d="M129.8 35.0 L132.1 33.9 L133.2 31.6 L134.3 33.9 L136.6 35.0 L134.3 36.1 L133.2 38.4 L132.1 36.1 Z" fill="#ff0000"/>
<path d="M128.8 39.1 L131.1 38.0 L132.2 35.7 L133.3 38.0 L135.6 39.1 L133.3 40.2 L132.2 42.5 L131.1 40.2 Z" fill="#ff0000"/>
<path d="M129.0 44.7 L131.3 43.6 L132.4 41.3 L133.5 43.6 L135.8 44.7 L133.5 45.8 L132.4 48.1 L131.3 45.8 Z" fill="#0000ff"/>
<circle cx="129.4" cy="46.7" r="1.3" fill="#00c800"/>
<path d="M135.9 26.3 L138.2 25.1 L139.3 22.9 L140.4 25.1 L142.7 26.3 L140.4 27.4 L139.3 29.7 L138.2 27.4 Z" fill="#0000ff"/>
<path d="M141.2 29.7 L141.2 35.7 L136.7 32.7 Z" fill="#e8a820"/>
<path d="M136.1 36.3 L138.4 35.1 L139.5 32.9 L140.7 35.1 L142.9 36.3 L140.7 37.4 L139.5 39.7 L138.4 37.4 Z" fill="#0000ff"/>
<path d="M142.1 39.0 L142.1 45.0 L137.6 42.0 Z" fill="#e8a820"/>
<path d="M148.2 24.3 L148.2 30.3 L143.7 27.3 Z" fill="#e8a820"/>
<path d="M143.2 32.8 L145.5 31.7 L146.6 29.4 L147.7 31.7 L150.0 32.8 L147.7 33.9 L146.6 36.2 L145.5 33.9 Z" fill="#0000ff"/>
<path d="M143.0 38.5 L145.3 37.4 L146.4 35.1 L147.5 37.4 L149.8 38.5 L147.5 39.7 L146.4 41.9 L145.3 39.7 Z" fill="#ff0000"/>
<path d="M149.4 24.7 L151.7 23.5 L152.8 21.3 L154.0 23.5 L156.2 24.7 L154.0 25.8 L152.8 28.1 L151.7 25.8 Z" fill="#0000ff"/>
<path d="M149.9 29.6 L152.1 28.5 L153.3 26.2 L154.4 28.5 L156.7 29.6 L154.4 30.7 L153.3 33.0 L152.1 30.7 Z" fill="#ff0000"/>
<circle cx="156.3" cy="31.6" r="1.3" fill="#00c800"/>
<path d="M149.4 34.1 L151.6 33.0 L152.8 30.7 L153.9 33.0 L156.2 34.1 L153.9 35.2 L152.8 37.5 L151.6 35.2 Z" fill="#0000ff"/>
<path d="M161.4 21.2 L161.4 27.2 L156.9 24.2 Z" fill="#e8a820"/>
<path d="M156.9 28.3 L159.2 27.2 L160.3 24.9 L161.4 27.2 L163.7 28.3 L161.4 29.5 L160.3 31.7 L159.2 29.5 Z" fill="#0000ff"/>
<path d="M156.0 33.3 L158.3 32.2 L159.4 29.9 L160.5 32.2 L162.8 33.3 L160.5 34.4 L159.4 36.7 L158.3 34.4 Z" fill="#0000ff"/>
<path d="M163.9 24.7 L166.1 23.6 L167.3 21.3 L168.4 23.6 L170.7 24.7 L168.4 25.9 L167.3 28.1 L166.1 25.9 Z" fill="#ff0000"/>
<path d="M163.3 27.4 L165.5 26.3 L166.7 24.0 L167.8 26.3 L170.1 27.4 L167.8 28.5 L166.7 30.8 L165.5 28.5 Z" fill="#0000ff"/>
<path d="M163.1 32.0 L165.4 30.8 L166.5 28.6 L167.7 30.8 L169.9 32.0 L167.7 33.1 L166.5 35.4 L165.4 33.1 Z" fill="#ff0000"/>
<path d="M169.7 24.7 L172.0 23.6 L173.1 21.3 L174.2 23.6 L176.5 24.7 L174.2 25.8 L173.1 28.1 L172.0 25.8 Z" fill="#0000ff"/>
<circle cx="170.1" cy="26.7" r="1.3" fill="#00c800"/>
<path d="M169.6 27.4 L171.9 26.3 L173.0 24.0 L174.1 26.3 L176.4 27.4 L174.1 28.6 L173.0 30.8 L171.9 28.6 Z" fill="#ff0000"/>
<path d="M170.2 31.6 L172.4 30.5 L173.6 28.2 L174.7 30.5 L177.0 31.6 L174.7 32.7 L173.6 35.0 L172.4 32.7 Z" fill="#0000ff"/>
<path d="M177.1 25.6 L179.4 24.4 L180.5 22.2 L181.6 24.4 L183.9 25.6 L181.6 26.7 L180.5 29.0 L179.4 26.7 Z" fill="#0000ff"/>
<path d="M176.4 30.1 L178.7 29.0 L179.8 26.7 L180.9 29.0 L183.2 30.1 L180.9 31.2 L179.8 33.5 L178.7 31.2 Z" fill="#0000ff"/>
<path d="M182.4 31.2 L182.4 37.2 L177.9 34.2 Z" fill="#e8a820"/>
<path d="M183.4 26.5 L185.7 25.4 L186.8 23.1 L188.0 25.4 L190.2 26.5 L188.0 27.7 L186.8 29.9 L185.7 27.7 Z" fill="#0000ff"/>
<path d="M184.3 31.4 L186.6 30.3 L187.7 28.0 L188.8 30.3 L191.1 31.4 L188.8 32.5 L187.7 34.8 L186.6 32.5 Z" fill="#0000ff"/>
<path d="M196.1 23.5 L196.1 29.5 L191.6 26.5 Z" fill="#e8a820"/>
<path d="M190.2 32.4 L192.5 31.3 L193.6 29.0 L194.8 31.3 L197.0 32.4 L194.8 33.6 L193.6 35.8 L192.5 33.6 Z" fill="#ff0000"/>
<path d="M196.9 26.4 L199.2 25.3 L200.3 23.0 L201.4 25.3 L203.7 26.4 L201.4 27.5 L200.3 29.8 L199.2 27.5 Z" fill="#0000ff"/>
<path d="M197.5 30.7 L199.7 29.6 L200.9 27.3 L202.0 29.6 L204.3 30.7 L202.0 31.8 L200.9 34.1 L199.7 31.8 Z" fill="#0000ff"/>
<path d="M204.6 26.2 L206.9 25.1 L208.0 22.8 L209.1 25.1 L211.4 26.2 L209.1 27.3 L208.0 29.6 L206.9 27.3 Z" fill="#ff0000"/>
<path d="M204.6 28.8 L206.9 27.7 L208.0 25.4 L209.1 27.7 L211.4 28.8 L209.1 29.9 L208.0 32.2 L206.9 29.9 Z" fill="#ff0000"/>
<path d="M216.2 23.2 L216.2 29.2 L211.7 26.2 Z" fill="#e8a820"/>
<path d="M211.0 32.5 L213.3 31.4 L214.4 29.1 L215.5 31.4 L217.8 32.5 L215.5 33.6 L214.4 35.9 L213.3 33.6 Z" fill="#ff0000"/>
<path d="M211.5 38.2 L213.8 37.1 L214.9 34.8 L216.0 37.1 L218.3 38.2 L216.0 39.3 L214.9 41.6 L213.8 39.3 Z" fill="#0000ff"/>
<path d="M217.5 28.4 L219.7 27.3 L220.9 25.0 L222.0 27.3 L224.3 28.4 L222.0 29.5 L220.9 31.8 L219.7 29.5 Z" fill="#ff0000"/>
<path d="M217.9 35.3 L220.2 34.2 L221.3 31.9 L222.5 34.2 L224.7 35.3 L222.5 36.4 L221.3 38.7 L220.2 36.4 Z" fill="#ff0000"/>
<path d="M217.4 40.3 L219.6 39.2 L220.8 36.9 L221.9 39.2 L224.2 40.3 L221.9 41.4 L220.8 43.7 L219.6 41.4 Z" fill="#0000ff"/>
<path d="M224.3 29.8 L226.6 28.6 L227.7 26.4 L228.8 28.6 L231.1 29.8 L228.8 30.9 L227.7 33.2 L226.6 30.9 Z" fill="#0000ff"/>
<path d="M224.3 34.8 L226.6 33.6 L227.7 31.4 L228.8 33.6 L231.1 34.8 L228.8 35.9 L227.7 38.2 L226.6 35.9 Z" fill="#0000ff"/>
<path d="M225.2 40.8 L227.4 39.7 L228.6 37.4 L229.7 39.7 L232.0 40.8 L229.7 41.9 L228.6 44.2 L227.4 41.9 Z" fill="#0000ff"/>
<circle cx="225.6" cy="42.8" r="1.3" fill="#00c800"/>
<path d="M236.4 27.7 L236.4 33.7 L231.9 30.7 Z" fill="#e8a820"/>
<path d="M232.0 35.7 L234.3 34.5 L235.4 32.3 L236.5 34.5 L238.8 35.7 L236.5 36.8 L235.4 39.1 L234.3 36.8 Z" fill="#0000ff"/>
<path d="M231.3 39.1 L233.6 38.0 L234.7 35.7 L235.8 38.0 L238.1 39.1 L235.8 40.3 L234.7 42.5 L233.6 40.3 Z" fill="#0000ff"/>
<path d="M238.6 32.4 L240.9 31.3 L242.0 29.0 L243.1 31.3 L245.4 32.4 L243.1 33.5 L242.0 35.8 L240.9 33.5 Z" fill="#ff0000"/>
<path d="M238.1 39.4 L240.4 38.3 L241.5 36.0 L242.6 38.3 L244.9 39.4 L242.6 40.5 L241.5 42.8 L240.4 40.5 Z" fill="#0000ff"/>
<path d="M244.7 35.9 L247.0 34.8 L248.1 32.5 L249.2 34.8 L251.5 35.9 L249.2 37.0 L248.1 39.3 L247.0 37.0 Z" fill="#ff0000"/>
<path d="M244.9 42.1 L247.1 41.0 L248.3 38.7 L249.4 41.0 L251.7 42.1 L249.4 43.3 L248.3 45.5 L247.1 43.3 Z" fill="#ff0000"/>
<path d="M245.6 48.1 L247.9 47.0 L249.0 44.7 L250.1 47.0 L252.4 48.1 L250.1 49.2 L249.0 51.5 L247.9 49.2 Z" fill="#ff0000"/>
<path d="M244.9 53.7 L247.1 52.6 L248.3 50.3 L249.4 52.6 L251.7 53.7 L249.4 54.9 L248.3 57.1 L247.1 54.9 Z" fill="#ff0000"/>
<path d="M251.4 40.5 L253.7 39.4 L254.8 37.1 L255.9 39.4 L258.2 40.5 L255.9 41.6 L254.8 43.9 L253.7 41.6 Z" fill="#0000ff"/>
<path d="M251.5 45.1 L253.7 44.0 L254.9 41.7 L256.0 44.0 L258.3 45.1 L256.0 46.3 L254.9 48.5 L253.7 46.3 Z" fill="#0000ff"/>
<path d="M251.4 49.6 L253.7 48.5 L254.8 46.2 L256.0 48.5 L258.2 49.6 L256.0 50.7 L254.8 53.0 L253.7 50.7 Z" fill="#ff0000"/>
<path d="M252.2 54.8 L254.5 53.7 L255.6 51.4 L256.7 53.7 L259.0 54.8 L256.7 55.9 L255.6 58.2 L254.5 55.9 Z" fill="#0000ff"/>
<circle cx="258.6" cy="56.8" r="1.3" fill="#00c800"/>
<path d="M252.4 59.0 L254.7 57.9 L255.8 55.6 L256.9 57.9 L259.2 59.0 L256.9 60.1 L255.8 62.4 L254.7 60.1 Z" fill="#0000ff"/>
<path d="M257.4 61.7 L257.4 67.7 L252.9 64.7 Z" fill="#e8a820"/>
<path d="M258.2 64.5 L260.5 63.4 L261.6 61.1 L262.7 63.4 L265.0 64.5 L262.7 65.6 L261.6 67.9 L260.5 65.6 Z" fill="#0000ff"/>
<path d="M259.2 67.8 L261.5 66.7 L262.6 64.4 L263.8 66.7 L266.0 67.8 L263.8 68.9 L262.6 71.2 L261.5 68.9 Z" fill="#ff0000"/>
<path d="M258.7 72.5 L261.0 71.3 L262.1 69.1 L263.2 71.3 L265.5 72.5 L263.2 73.6 L262.1 75.9 L261.0 73.6 Z" fill="#0000ff"/>
<circle cx="265.1" cy="74.5" r="1.3" fill="#00c800"/>
<path d="M258.8 77.4 L261.0 76.3 L262.2 74.0 L263.3 76.3 L265.6 77.4 L263.3 78.5 L262.2 80.8 L261.0 78.5 Z" fill="#0000ff"/>
<path d="M258.9 81.7 L261.2 80.5 L262.3 78.3 L263.4 80.5 L265.7 81.7 L263.4 82.8 L262.3 85.1 L261.2 82.8 Z" fill="#0000ff"/>
<path d="M265.3 77.3 L267.6 76.2 L268.7 73.9 L269.8 76.2 L272.1 77.3 L269.8 78.5 L268.7 80.7 L267.6 78.5 Z" fill="#ff0000"/>
<path d="M265.1 81.0 L267.4 79.9 L268.5 77.6 L269.6 79.9 L271.9 81.0 L269.6 82.1 L268.5 84.4 L267.4 82.1 Z" fill="#0000ff"/>
<path d="M265.8 87.1 L268.1 86.0 L269.2 83.7 L270.4 86.0 L272.6 87.1 L270.4 88.3 L269.2 90.5 L268.1 88.3 Z" fill="#ff0000"/>
<path d="M270.4 89.0 L270.4 95.0 L265.9 92.0 Z" fill="#e8a820"/>
<path d="M266.1 96.0 L268.4 94.8 L269.5 92.6 L270.6 94.8 L272.9 96.0 L270.6 97.1 L269.5 99.4 L268.4 97.1 Z" fill="#ff0000"/>
<path d="M272.6 82.7 L274.9 81.6 L276.0 79.3 L277.1 81.6 L279.4 82.7 L277.1 83.8 L276.0 86.1 L274.9 83.8 Z" fill="#0000ff"/>
<path d="M272.5 87.0 L274.8 85.9 L275.9 83.6 L277.0 85.9 L279.3 87.0 L277.0 88.1 L275.9 90.4 L274.8 88.1 Z" fill="#ff0000"/>
<path d="M272.0 90.9 L274.3 89.8 L275.4 87.5 L276.5 89.8 L278.8 90.9 L276.5 92.1 L275.4 94.3 L274.3 92.1 Z" fill="#ff0000"/>
<path d="M272.3 94.9 L274.6 93.8 L275.7 91.5 L276.8 93.8 L279.1 94.9 L276.8 96.0 L275.7 98.3 L274.6 96.0 Z" fill="#0000ff"/>
<path d="M272.4 99.6 L274.7 98.5 L275.8 96.2 L277.0 98.5 L279.2 99.6 L277.0 100.7 L275.8 103.0 L274.7 100.7 Z" fill="#0000ff"/>
<path d="M285.2 83.0 L285.2 89.0 L280.7 86.0 Z" fill="#e8a820"/>
<path d="M284.1 87.2 L284.1 93.2 L279.6 90.2 Z" fill="#e8a820"/>
<path d="M279.0 95.5 L281.3 94.4 L282.4 92.1 L283.5 94.4 L285.8 95.5 L283.5 96.7 L282.4 98.9 L281.3 96.7 Z" fill="#0000ff"/>
<path d="M279.3 100.1 L281.6 99.0 L282.7 96.7 L283.8 99.0 L286.1 100.1 L283.8 101.2 L282.7 103.5 L281.6 101.2 Z" fill="#0000ff"/>
<path d="M291.1 84.5 L291.1 90.5 L286.6 87.5 Z" fill="#e8a820"/>
<path d="M285.4 94.6 L287.7 93.5 L288.8 91.2 L289.9 93.5 L292.2 94.6 L289.9 95.7 L288.8 98.0 L287.7 95.7 Z" fill="#ff0000"/>
<path d="M286.1 99.9 L288.4 98.8 L289.5 96.5 L290.6 98.8 L292.9 99.9 L290.6 101.0 L289.5 103.3 L288.4 101.0 Z" fill="#ff0000"/>
<path d="M292.3 87.3 L294.6 86.2 L295.7 83.9 L296.8 86.2 L299.1 87.3 L296.8 88.4 L295.7 90.7 L294.6 88.4 Z" fill="#0000ff"/>
<path d="M292.6 94.2 L294.9 93.1 L296.0 90.8 L297.2 93.1 L299.4 94.2 L297.2 95.3 L296.0 97.6 L294.9 95.3 Z" fill="#0000ff"/>
<path d="M293.1 99.7 L295.4 98.6 L296.5 96.3 L297.6 98.6 L299.9 99.7 L297.6 100.9 L296.5 103.1 L295.4 100.9 Z" fill="#0000ff"/>
<circle cx="293.5" cy="101.7" r="1.3" fill="#00c800"/>
<path d="M300.0 83.9 L302.3 82.8 L303.4 80.5 L304.5 82.8 L306.8 83.9 L304.5 85.0 L303.4 87.3 L302.3 85.0 Z" fill="#0000ff"/>
<path d="M299.9 88.2 L302.2 87.1 L303.3 84.8 L304.4 87.1 L306.7 88.2 L304.4 89.4 L303.3 91.6 L302.2 89.4 Z" fill="#ff0000"/>
<path d="M300.0 92.1 L302.3 91.0 L303.4 88.7 L304.5 91.0 L306.8 92.1 L304.5 93.2 L303.4 95.5 L302.3 93.2 Z" fill="#0000ff"/>
<path d="M300.0 97.4 L302.3 96.3 L303.4 94.0 L304.5 96.3 L306.8 97.4 L304.5 98.5 L303.4 100.8 L302.3 98.5 Z" fill="#ff0000"/>
<path d="M306.4 78.1 L308.6 77.0 L309.8 74.7 L310.9 77.0 L313.2 78.1 L310.9 79.3 L309.8 81.5 L308.6 79.3 Z" fill="#ff0000"/>
<path d="M306.5 82.9 L308.8 81.8 L309.9 79.5 L311.0 81.8 L313.3 82.9 L311.0 84.0 L309.9 86.3 L308.8 84.0 Z" fill="#0000ff"/>
<path d="M305.8 88.5 L308.1 87.4 L309.2 85.1 L310.3 87.4 L312.6 88.5 L310.3 89.6 L309.2 91.9 L308.1 89.6 Z" fill="#ff0000"/>
<path d="M306.6 93.2 L308.9 92.0 L310.0 89.8 L311.2 92.0 L313.4 93.2 L311.2 94.3 L310.0 96.6 L308.9 94.3 Z" fill="#0000ff"/>
<path d="M313.7 58.7 L316.0 57.6 L317.1 55.3 L318.2 57.6 L320.5 58.7 L318.2 59.8 L317.1 62.1 L316.0 59.8 Z" fill="#ff0000"/>
<path d="M313.7 63.7 L316.0 62.6 L317.1 60.3 L318.2 62.6 L320.5 63.7 L318.2 64.8 L317.1 67.1 L316.0 64.8 Z" fill="#ff0000"/>
<path d="M313.7 69.2 L316.0 68.0 L317.1 65.8 L318.2 68.0 L320.5 69.2 L318.2 70.3 L317.1 72.6 L316.0 70.3 Z" fill="#0000ff"/>
<path d="M313.8 74.0 L316.1 72.9 L317.2 70.6 L318.3 72.9 L320.6 74.0 L318.3 75.2 L317.2 77.4 L316.1 75.2 Z" fill="#ff0000"/>
<path d="M313.5 79.7 L315.8 78.6 L316.9 76.3 L318.0 78.6 L320.3 79.7 L318.0 80.9 L316.9 83.1 L315.8 80.9 Z" fill="#0000ff"/>
<circle cx="319.9" cy="81.7" r="1.3" fill="#00c800"/>
<path d="M313.4 83.2 L315.7 82.1 L316.8 79.8 L318.0 82.1 L320.2 83.2 L318.0 84.4 L316.8 86.6 L315.7 84.4 Z" fill="#0000ff"/>
<path d="M319.9 49.4 L322.2 48.3 L323.3 46.0 L324.4 48.3 L326.7 49.4 L324.4 50.5 L323.3 52.8 L322.2 50.5 Z" fill="#ff0000"/>
<path d="M319.7 53.7 L321.9 52.6 L323.1 50.3 L324.2 52.6 L326.5 53.7 L324.2 54.9 L323.1 57.1 L321.9 54.9 Z" fill="#ff0000"/>
<path d="M320.4 58.8 L322.7 57.6 L323.8 55.4 L324.9 57.6 L327.2 58.8 L324.9 59.9 L323.8 62.2 L322.7 59.9 Z" fill="#ff0000"/>
<circle cx="320.8" cy="60.8" r="1.3" fill="#00c800"/>
<path d="M320.6 62.9 L322.9 61.8 L324.0 59.5 L325.1 61.8 L327.4 62.9 L325.1 64.0 L324.0 66.3 L322.9 64.0 Z" fill="#0000ff"/>
<path d="M320.1 66.7 L322.4 65.6 L323.5 63.3 L324.6 65.6 L326.9 66.7 L324.6 67.8 L323.5 70.1 L322.4 67.8 Z" fill="#0000ff"/>
<circle cx="320.5" cy="68.7" r="1.3" fill="#00c800"/>
<path d="M319.6 71.6 L321.8 70.5 L323.0 68.2 L324.1 70.5 L326.4 71.6 L324.1 72.8 L323.0 75.0 L321.8 72.8 Z" fill="#ff0000"/>
<circle cx="320.0" cy="73.6" r="1.3" fill="#00c800"/>
<path d="M327.2 48.4 L329.5 47.2 L330.6 45.0 L331.8 47.2 L334.0 48.4 L331.8 49.5 L330.6 51.8 L329.5 49.5 Z" fill="#ff0000"/>
<path d="M327.3 53.7 L329.6 52.6 L330.7 50.3 L331.9 52.6 L334.1 53.7 L331.9 54.9 L330.7 57.1 L329.6 54.9 Z" fill="#ff0000"/>
<path d="M327.2 58.3 L329.5 57.1 L330.6 54.9 L331.7 57.1 L334.0 58.3 L331.7 59.4 L330.6 61.7 L329.5 59.4 Z" fill="#ff0000"/>
<circle cx="333.6" cy="60.3" r="1.3" fill="#00c800"/>
<path d="M327.1 63.3 L329.4 62.2 L330.5 59.9 L331.6 62.2 L333.9 63.3 L331.6 64.4 L330.5 66.7 L329.4 64.4 Z" fill="#0000ff"/>
<path d="M327.2 67.9 L329.5 66.7 L330.6 64.5 L331.8 66.7 L334.0 67.9 L331.8 69.0 L330.6 71.3 L329.5 69.0 Z" fill="#0000ff"/>
<path d="M339.5 50.5 L339.5 56.5 L335.0 53.5 Z" fill="#e8a820"/>
<path d="M333.7 58.2 L336.0 57.1 L337.1 54.8 L338.2 57.1 L340.5 58.2 L338.2 59.3 L337.1 61.6 L336.0 59.3 Z" fill="#0000ff"/>
<path d="M333.6 62.9 L335.8 61.8 L337.0 59.5 L338.1 61.8 L340.4 62.9 L338.1 64.0 L337.0 66.3 L335.8 64.0 Z" fill="#ff0000"/>
<path d="M333.5 68.8 L335.8 67.7 L336.9 65.4 L338.0 67.7 L340.3 68.8 L338.0 69.9 L336.9 72.2 L335.8 69.9 Z" fill="#ff0000"/>
<path d="M345.6 50.9 L345.6 56.9 L341.1 53.9 Z" fill="#e8a820"/>
<circle cx="346.6" cy="55.9" r="1.3" fill="#00c800"/>
<path d="M340.2 60.0 L342.5 58.9 L343.6 56.6 L344.8 58.9 L347.0 60.0 L344.8 61.2 L343.6 63.4 L342.5 61.2 Z" fill="#ff0000"/>
<path d="M340.8 66.0 L343.1 64.9 L344.2 62.6 L345.3 64.9 L347.6 66.0 L345.3 67.1 L344.2 69.4 L343.1 67.1 Z" fill="#ff0000"/>
<path d="M340.3 71.5 L342.5 70.4 L343.7 68.1 L344.8 70.4 L347.1 71.5 L344.8 72.6 L343.7 74.9 L342.5 72.6 Z" fill="#ff0000"/>
<path d="M347.4 57.1 L349.7 56.0 L350.8 53.7 L351.9 56.0 L354.2 57.1 L351.9 58.3 L350.8 60.5 L349.7 58.3 Z" fill="#0000ff"/>
<path d="M347.8 61.7 L350.0 60.5 L351.2 58.3 L352.3 60.5 L354.6 61.7 L352.3 62.8 L351.2 65.1 L350.0 62.8 Z" fill="#ff0000"/>
<path d="M352.8 64.2 L352.8 70.2 L348.3 67.2 Z" fill="#e8a820"/>
<path d="M347.3 71.8 L349.5 70.7 L350.7 68.4 L351.8 70.7 L354.1 71.8 L351.8 72.9 L350.7 75.2 L349.5 72.9 Z" fill="#ff0000"/>
<path d="M347.6 76.3 L349.9 75.1 L351.0 72.9 L352.1 75.1 L354.4 76.3 L352.1 77.4 L351.0 79.7 L349.9 77.4 Z" fill="#ff0000"/>
<path d="M353.8 57.8 L356.0 56.7 L357.2 54.4 L358.3 56.7 L360.6 57.8 L358.3 59.0 L357.2 61.2 L356.0 59.0 Z" fill="#ff0000"/>
<path d="M354.5 64.4 L356.7 63.3 L357.9 61.0 L359.0 63.3 L361.3 64.4 L359.0 65.6 L357.9 67.8 L356.7 65.6 Z" fill="#0000ff"/>
<path d="M360.0 65.6 L360.0 71.6 L355.5 68.6 Z" fill="#e8a820"/>
<path d="M354.0 75.6 L356.3 74.5 L357.4 72.2 L358.6 74.5 L360.8 75.6 L358.6 76.8 L357.4 79.0 L356.3 76.8 Z" fill="#ff0000"/>
<path d="M360.8 58.6 L363.1 57.5 L364.2 55.2 L365.3 57.5 L367.6 58.6 L365.3 59.7 L364.2 62.0 L363.1 59.7 Z" fill="#0000ff"/>
<circle cx="361.2" cy="60.6" r="1.3" fill="#00c800"/>
<path d="M361.5 63.2 L363.8 62.1 L364.9 59.8 L366.0 62.1 L368.3 63.2 L366.0 64.3 L364.9 66.6 L363.8 64.3 Z" fill="#ff0000"/>
<path d="M361.2 67.4 L363.5 66.3 L364.6 64.0 L365.8 66.3 L368.0 67.4 L365.8 68.6 L364.6 70.8 L363.5 68.6 Z" fill="#ff0000"/>
<path d="M361.3 73.6 L363.6 72.4 L364.7 70.2 L365.8 72.4 L368.1 73.6 L365.8 74.7 L364.7 77.0 L363.6 74.7 Z" fill="#ff0000"/>
<path d="M367.2 58.3 L369.5 57.2 L370.6 54.9 L371.8 57.2 L374.0 58.3 L371.8 59.5 L370.6 61.7 L369.5 59.5 Z" fill="#0000ff"/>
<path d="M373.2 60.1 L373.2 66.1 L368.7 63.1 Z" fill="#e8a820"/>
<path d="M373.0 64.1 L373.0 70.1 L368.5 67.1 Z" fill="#e8a820"/>
<circle cx="374.0" cy="69.1" r="1.3" fill="#00c800"/>
<path d="M367.8 70.5 L370.1 69.4 L371.2 67.1 L372.3 69.4 L374.6 70.5 L372.3 71.7 L371.2 73.9 L370.1 71.7 Z" fill="#0000ff"/>
<path d="M374.3 58.5 L376.6 57.4 L377.7 55.1 L378.8 57.4 L381.1 58.5 L378.8 59.7 L377.7 61.9 L376.6 59.7 Z" fill="#ff0000"/>
<circle cx="380.7" cy="60.5" r="1.3" fill="#00c800"/>
<path d="M374.7 63.5 L377.0 62.3 L378.1 60.1 L379.3 62.3 L381.5 63.5 L379.3 64.6 L378.1 66.9 L377.0 64.6 Z" fill="#ff0000"/>
<circle cx="375.1" cy="65.5" r="1.3" fill="#00c800"/>
<path d="M374.4 66.7 L376.7 65.6 L377.8 63.3 L378.9 65.6 L381.2 66.7 L378.9 67.8 L377.8 70.1 L376.7 67.8 Z" fill="#ff0000"/>
<path d="M374.7 72.5 L377.0 71.4 L378.1 69.1 L379.2 71.4 L381.5 72.5 L379.2 73.6 L378.1 75.9 L377.0 73.6 Z" fill="#ff0000"/>
<path d="M381.0 57.3 L383.3 56.2 L384.4 53.9 L385.6 56.2 L387.8 57.3 L385.6 58.5 L384.4 60.7 L383.3 58.5 Z" fill="#0000ff"/>
<path d="M381.9 61.9 L384.2 60.8 L385.3 58.5 L386.5 60.8 L388.7 61.9 L386.5 63.0 L385.3 65.3 L384.2 63.0 Z" fill="#0000ff"/>
<path d="M381.1 68.5 L383.4 67.4 L384.5 65.1 L385.6 67.4 L387.9 68.5 L385.6 69.6 L384.5 71.9 L383.4 69.6 Z" fill="#ff0000"/>
<path d="M381.2 73.7 L383.4 72.6 L384.6 70.3 L385.7 72.6 L388.0 73.7 L385.7 74.8 L384.6 77.1 L383.4 74.8 Z" fill="#ff0000"/>
<path d="M387.8 53.6 L390.1 52.5 L391.2 50.2 L392.3 52.5 L394.6 53.6 L392.3 54.7 L391.2 57.0 L390.1 54.7 Z" fill="#0000ff"/>
<path d="M388.2 59.7 L390.5 58.6 L391.6 56.3 L392.8 58.6 L395.0 59.7 L392.8 60.8 L391.6 63.1 L390.5 60.8 Z" fill="#0000ff"/>
<path d="M387.7 64.5 L390.0 63.4 L391.1 61.1 L392.2 63.4 L394.5 64.5 L392.2 65.6 L391.1 67.9 L390.0 65.6 Z" fill="#ff0000"/>
<circle cx="388.1" cy="66.5" r="1.3" fill="#00c800"/>
<path d="M388.0 68.5 L390.3 67.4 L391.4 65.1 L392.6 67.4 L394.8 68.5 L392.6 69.6 L391.4 71.9 L390.3 69.6 Z" fill="#0000ff"/>
<path d="M394.6 53.3 L396.9 52.2 L398.0 49.9 L399.2 52.2 L401.4 53.3 L399.2 54.5 L398.0 56.7 L396.9 54.5 Z" fill="#ff0000"/>
<circle cx="401.0" cy="55.3" r="1.3" fill="#00c800"/>
<path d="M394.8 60.4 L397.1 59.3 L398.2 57.0 L399.3 59.3 L401.6 60.4 L399.3 61.6 L398.2 63.8 L397.1 61.6 Z" fill="#0000ff"/>
<path d="M394.6 65.4 L396.9 64.3 L398.0 62.0 L399.1 64.3 L401.4 65.4 L399.1 66.5 L398.0 68.8 L396.9 66.5 Z" fill="#ff0000"/>
</g>
<polyline points="14,0 40,10 88,26 130,34 200,33 262,38 285,45 318,60 326,62" fill="none" stroke="#e00000" stroke-width="1"/>
<polyline points="17,3 28,20 40,32 50,40 65,45 85,43 105,33 140,28 200,31" fill="none" stroke="#e00000" stroke-width="1"/>
<polyline points="262,48 275,68 290,87 302,93" fill="none" stroke="#e00000" stroke-width="1"/>
<polyline points="300,94 320,80 343,62" fill="none" stroke="#e00000" stroke-width="1"/>
<polyline points="305,96 330,82 350,68" fill="none" stroke="#e00000" stroke-width="1"/>
<polyline points="376,73 400,73" fill="none" stroke="#e00000" stroke-width="1"/>
</svg>
<div class="a" style="left:0;top:125px;width:640px;height:22px;background:#f0f0f0"></div>
<div class="a" style="left:0;top:125px;width:640px;height:1px;background:#e6e6e6"></div>
<div class="a" style="left:0;top:126px;width:640px;height:1px;background:#b8b8b8"></div>
<div class="a" style="left:0;top:127px;width:640px;height:2px;background:#fcfcfc"></div>
<div class="a" style="left:566px;top:127px;width:74px;height:1px;background:#3a3a3a"></div>
<div class="a" style="left:0;top:143px;width:640px;height:4px;background:#f6f6f6"></div>
<div class="a" style="left:75px;top:129px;width:1px;height:12px;background:#5a5a5a"></div>
<div class="a" style="left:157px;top:129px;width:1px;height:12px;background:#5a5a5a"></div>
<div class="a" style="left:228px;top:129px;width:1px;height:12px;background:#5a5a5a"></div>
<div class="a" style="left:300px;top:129px;width:1px;height:12px;background:#5a5a5a"></div>
<div class="a" style="left:378px;top:129px;width:1px;height:12px;background:#5a5a5a"></div>
<div class="a" style="left:450px;top:125px;width:116px;height:18px;background:#fff;border:1px solid #1e1e1e;border-top:none"></div>
<svg class="a" style="left:600px;top:128px" width="40" height="14"><path d="M15 4 L11 7.5 L15 11 Z" fill="#1a1a1a"/><path d="M27.5 4 L31 7.5 L27.5 11 Z" fill="#a0a0a0"/></svg>
<div class="a" style="left:0;top:147px;width:11px;height:12px;background:#f6f6f6"></div>
<div class="a" style="left:0;top:159px;width:10px;height:321px;background:#abc4e1"></div>
<div class="a" style="left:10px;top:159px;width:1px;height:305px;background:#e4e8ee"></div><div class="a" style="left:11px;top:147px;width:1px;height:317px;background:#a8a8a8"></div>
<div class="a" style="left:12px;top:147px;width:624px;height:1px;background:#a0a0a0"></div>
<div class="a" style="left:636px;top:125px;width:3px;height:355px;background:#f8f8f8"></div>

<div class="a" style="left:639px;top:125px;width:1px;height:355px;background:#6e6e6e"></div>
<svg class="a" style="left:1px;top:148.5px" width="8" height="7"><path d="M1.8 1.8 L5.6 5.6 M5.6 1.8 L1.8 5.6" stroke="#000" stroke-width="1.6"/></svg>
<div class="row g" style="top:148px"></div>
<div class="row w" style="top:165px"></div>
<div class="line" style="top:164px"></div>
<div class="row g" style="top:182px"></div>
<div class="line" style="top:181px"></div>
<div class="row w" style="top:199px"></div>
<div class="line" style="top:198px"></div>
<div class="row g" style="top:216px"></div>
<div class="line" style="top:215px"></div>
<div class="row w" style="top:233px"></div>
<div class="line" style="top:232px"></div>
<div class="row g" style="top:250px"></div>
<div class="line" style="top:249px"></div>
<div class="row w" style="top:267px"></div>
<div class="line" style="top:266px"></div>
<div class="row g" style="top:284px"></div>
<div class="line" style="top:283px"></div>
<div class="row w" style="top:301px"></div>
<div class="line" style="top:300px"></div>
<div class="row g" style="top:318px"></div>
<div class="line" style="top:317px"></div>
<div class="row w" style="top:335px"></div>
<div class="line" style="top:334px"></div>
<div class="row g" style="top:352px"></div>
<div class="line" style="top:351px"></div>
<div class="line" style="top:368px"></div>
<div class="a" style="left:225px;top:166px;width:409px;height:14px;border:1px solid #3b7fd4;background:#00c000"><div class="a" style="left:0;top:0;width:14px;height:12px;background:#a9a9a9"></div><div class="a" style="left:14px;top:0;width:50px;height:12px;background:#fba0a0"></div></div>
<div class="a" style="left:11px;top:463px;width:625px;height:1px;background:#3a3a3a"></div>
<div class="a" style="left:11px;top:464px;width:625px;height:16px;background:#f0f0f0"></div>
<div class="a" style="left:67px;top:466px;width:1px;height:11px;background:#7a7a7a"></div>
<div class="a" style="left:115px;top:466px;width:1px;height:11px;background:#7a7a7a"></div>
<div class="a" style="left:256px;top:466px;width:1px;height:11px;background:#7a7a7a"></div>
<div class="a" style="left:159px;top:463px;width:47px;height:17px;background:#fff;border:1px solid #2a2a2a;border-top:none"></div>
<div class="c" style="left:18.10px;top:148px;color:#141414;transform:scaleX(0.900)">Bars in test</div>
<div class="c" style="left:186.12px;top:148px;color:#141414;transform:scaleX(0.883)">7636</div>
<div class="c" style="left:226.90px;top:148px;color:#141414;transform:scaleX(0.924)">Ticks modelled</div>
<div class="c" style="left:387.15px;top:148px;color:#141414;transform:scaleX(0.847)">173474</div>
<div class="c" style="left:437.43px;top:148px;color:#141414;transform:scaleX(0.972)">Modelling quality</div>
<div class="c" style="left:617.00px;top:148px;color:#141414;transform:scaleX(1.000)">n/a</div>
<div class="c" style="left:18.07px;top:165px;color:#141414;transform:scaleX(0.933)">Mismatched charts ...</div>
<div class="c" style="left:195.90px;top:165px;color:#141414;transform:scaleX(0.950)">35</div>
<div class="c" style="left:18.04px;top:182px;color:#141414;transform:scaleX(0.956)">Initial deposit</div>
<div class="c" style="left:178.32px;top:182px;color:#141414;transform:scaleX(0.878)">300.00</div>
<div class="c" style="left:437.52px;top:182px;color:#141414;transform:scaleX(0.882)">Spread</div>
<div class="c" style="left:577.98px;top:182px;color:#141414;transform:scaleX(0.916)">Current (19)</div>
<div class="c" style="left:19.00px;top:199px;color:#141414;transform:scaleX(0.949)">Total net profit</div>
<div class="c" style="left:173.90px;top:199px;color:#141414;transform:scaleX(0.856)">4613.92</div>
<div class="c" style="left:226.90px;top:199px;color:#141414;transform:scaleX(0.904)">Gross profit</div>
<div class="c" style="left:380.00px;top:199px;color:#141414;transform:scaleX(0.837)">28726.08</div>
<div class="c" style="left:438.40px;top:199px;color:#141414;transform:scaleX(0.846)">Gross loss</div>
<div class="c" style="left:590.60px;top:199px;color:#141414;transform:scaleX(0.862)">-24112.16</div>
<div class="c" style="left:18.03px;top:216px;color:#141414;transform:scaleX(0.969)">Profit factor</div>
<div class="c" style="left:188.61px;top:216px;color:#141414;transform:scaleX(0.890)">1.19</div>
<div class="c" style="left:225.98px;top:216px;color:#141414;transform:scaleX(0.924)">Expected payoff</div>
<div class="c" style="left:400.60px;top:216px;color:#141414;transform:scaleX(0.895)">0.11</div>
<div class="c" style="left:19.00px;top:233px;color:#141414;transform:scaleX(0.936)">Absolute drawdown</div>
<div class="c" style="left:178.32px;top:233px;color:#141414;transform:scaleX(0.878)">188.91</div>
<div class="c" style="left:225.94px;top:233px;color:#141414;transform:scaleX(0.961)">Maximal drawdown</div>
<div class="c" style="left:358.40px;top:233px;color:#141414;transform:scaleX(0.859)">887.80 (16.9...</div>
<div class="c" style="left:437.47px;top:233px;color:#141414;transform:scaleX(0.930)">Relative drawdown</div>
<div class="c" style="left:562.75px;top:233px;color:#141414;transform:scaleX(0.855)">72.82% (297.65)</div>
<div class="c" style="left:19.00px;top:250px;color:#141414;transform:scaleX(0.891)">Total trades</div>
<div class="c" style="left:182.30px;top:250px;color:#141414;transform:scaleX(0.833)">43585</div>
<div class="c" style="left:225.97px;top:250px;color:#141414;transform:scaleX(0.931)">Short positions (won %)</div>
<div class="c" style="left:351.90px;top:250px;color:#141414;transform:scaleX(0.854)">22385 (59.76%)</div>
<div class="c" style="left:437.46px;top:250px;color:#141414;transform:scaleX(0.935)">Long positions (won %)</div>
<div class="c" style="left:565.90px;top:250px;color:#141414;transform:scaleX(0.847)">21200 (58.16%)</div>
<div class="c" style="left:225.95px;top:267px;color:#141414;transform:scaleX(0.946)">Profit trades (% of total)</div>
<div class="c" style="left:352.00px;top:267px;color:#141414;transform:scaleX(0.853)">25707 (58.98%)</div>
<div class="c" style="left:437.49px;top:267px;color:#141414;transform:scaleX(0.906)">Loss trades (% of total)</div>
<div class="c" style="left:565.35px;top:267px;color:#141414;transform:scaleX(0.855)">17878 (41.02%)</div>
<div class="c" style="left:173.90px;top:284px;color:#141414;transform:scaleX(0.903)">Largest</div>
<div class="c" style="left:225.92px;top:284px;color:#141414;transform:scaleX(0.982)">profit trade</div>
<div class="c" style="left:395.20px;top:284px;color:#141414;transform:scaleX(0.863)">27.00</div>
<div class="c" style="left:437.48px;top:284px;color:#141414;transform:scaleX(0.924)">loss trade</div>
<div class="c" style="left:605.50px;top:284px;color:#141414;transform:scaleX(0.855)">-47.72</div>
<div class="c" style="left:170.20px;top:301px;color:#141414;transform:scaleX(0.905)">Average</div>
<div class="c" style="left:225.92px;top:301px;color:#141414;transform:scaleX(0.982)">profit trade</div>
<div class="c" style="left:400.44px;top:301px;color:#141414;transform:scaleX(0.860)">1.12</div>
<div class="c" style="left:437.48px;top:301px;color:#141414;transform:scaleX(0.924)">loss trade</div>
<div class="c" style="left:610.40px;top:301px;color:#141414;transform:scaleX(0.864)">-1.35</div>
<div class="c" style="left:160.30px;top:318px;color:#141414;transform:scaleX(1.000)">Maximum</div>
<div class="c" style="left:226.90px;top:318px;color:#141414;transform:scaleX(0.929)">consecutive wins (profit ...</div>
<div class="c" style="left:371.75px;top:318px;color:#141414;transform:scaleX(0.835)">41 (142.04)</div>
<div class="c" style="left:438.40px;top:318px;color:#141414;transform:scaleX(0.889)">consecutive losses (loss ...</div>
<div class="c" style="left:584.90px;top:318px;color:#141414;transform:scaleX(0.889)">44 (-84.12)</div>
<div class="c" style="left:167.30px;top:335px;color:#141414;transform:scaleX(1.000)">Maximal</div>
<div class="c" style="left:226.90px;top:335px;color:#141414;transform:scaleX(0.937)">consecutive profit (coun...</div>
<div class="c" style="left:369.93px;top:335px;color:#141414;transform:scaleX(0.867)">317.41 (17)</div>
<div class="c" style="left:438.40px;top:335px;color:#141414;transform:scaleX(0.917)">consecutive loss (count ...</div>
<div class="c" style="left:580.30px;top:335px;color:#141414;transform:scaleX(0.876)">-481.25 (18)</div>
<div class="c" style="left:170.20px;top:352px;color:#141414;transform:scaleX(0.905)">Average</div>
<div class="c" style="left:226.90px;top:352px;color:#141414;transform:scaleX(0.914)">consecutive wins</div>
<div class="c" style="left:412.80px;top:352px;color:#141414;transform:scaleX(0.950)">5</div>
<div class="c" style="left:438.40px;top:352px;color:#141414;transform:scaleX(0.889)">consecutive losses</div>
<div class="c" style="left:626.30px;top:352px;color:#141414;transform:scaleX(0.950)">3</div>
<div class="c" style="left:12.18px;top:127px;color:#6b6b6b;transform:scaleX(0.819)">EURUSD,H1</div>
<div class="c" style="left:84.67px;top:127px;color:#6b6b6b;transform:scaleX(0.829)">EURUSD,Daily</div>
<div class="c" style="left:165.17px;top:127px;color:#6b6b6b;transform:scaleX(0.831)">EURUSD,H1</div>
<div class="c" style="left:238.00px;top:127px;color:#6b6b6b;transform:scaleX(0.825)">GBPUSD,H1</div>
<div class="c" style="left:309.50px;top:127px;color:#6b6b6b;transform:scaleX(0.835)">GBPUSD,M30</div>
<div class="c" style="left:386.14px;top:127px;color:#6b6b6b;transform:scaleX(0.863)">XAUUSD,H4</div>
<div class="c" style="left:459.11px;top:127px;color:#141414;transform:scaleX(0.888)">XAUUSD,M30 (visual)</div>
<div class="c" style="left:21.59px;top:463px;color:#6b6b6b;transform:scaleX(0.910)">Settings</div>
<div class="c" style="left:74.14px;top:463px;color:#6b6b6b;transform:scaleX(0.861)">Results</div>
<div class="c" style="left:124.00px;top:463px;color:#6b6b6b;transform:scaleX(0.867)">Graph</div>
<div class="c" style="left:214.70px;top:463px;color:#6b6b6b;transform:scaleX(0.886)">Journal</div>
<div class="c" style="left:167.51px;top:463px;color:#141414;transform:scaleX(0.894)">Report</div>
<svg class="a" style="left:0;top:440px" width="10" height="40"><text transform="translate(8.6,42.5) rotate(-90)" font-size="10" fill="#1c2630" stroke="#1c2630" textLength="28.5" lengthAdjust="spacingAndGlyphs">Tester</text></svg>
</body></html>
